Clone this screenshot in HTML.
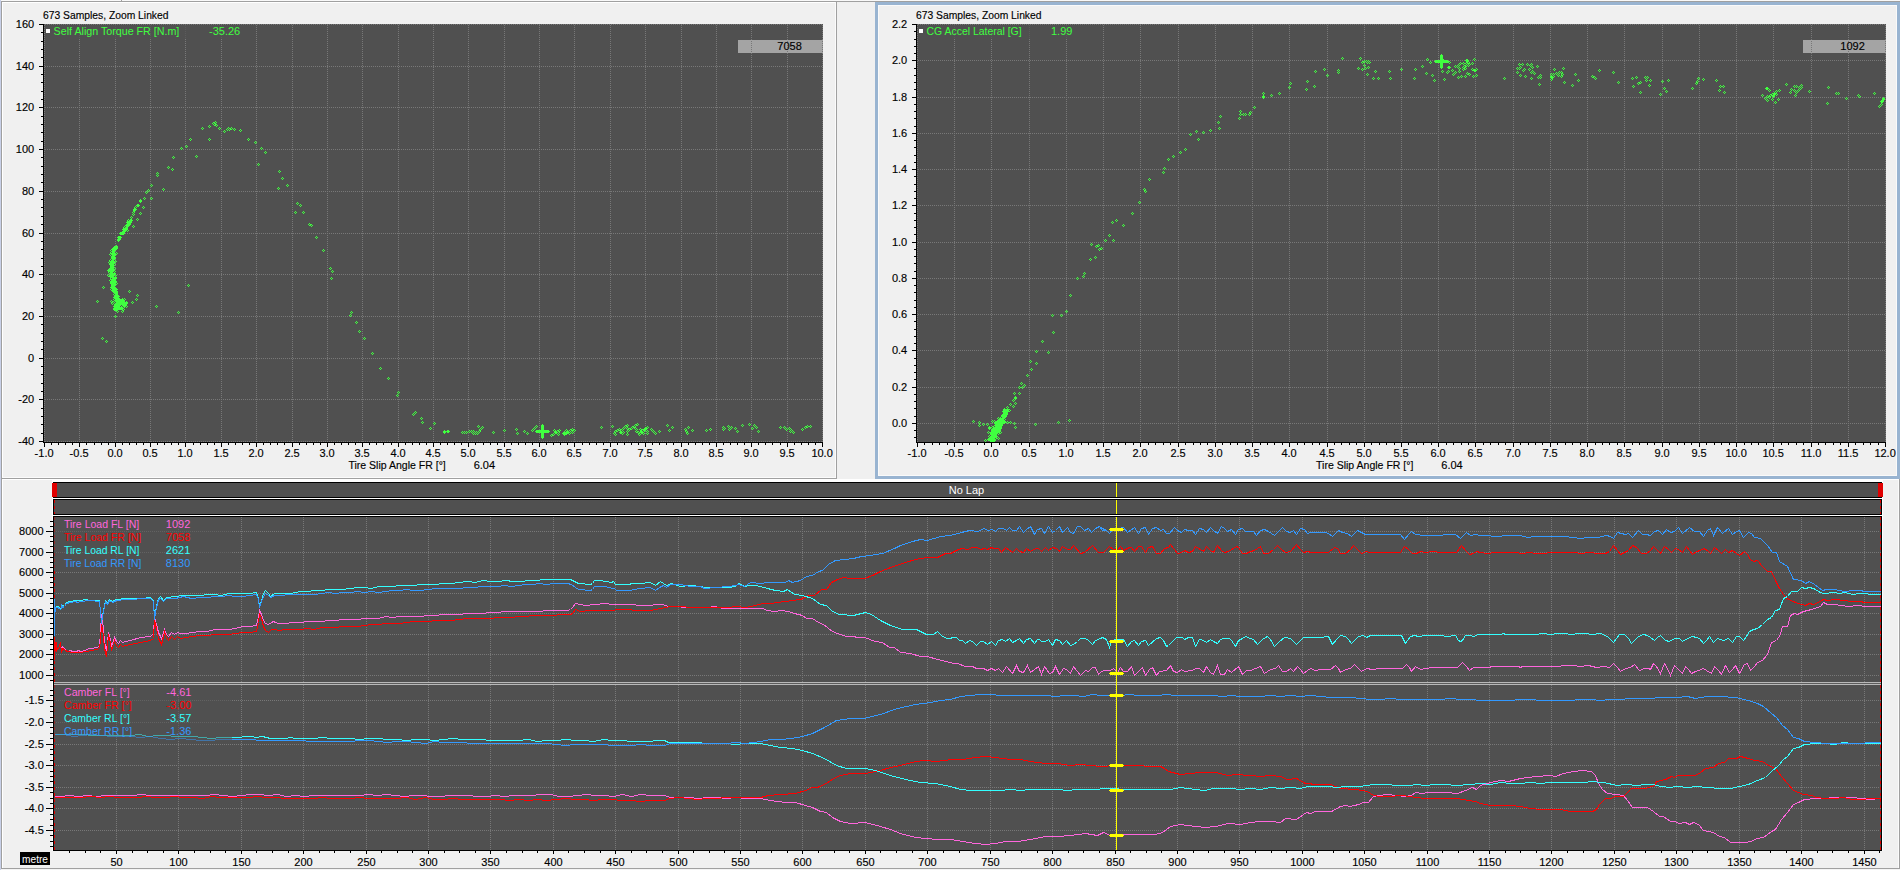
<!DOCTYPE html><html><head><meta charset="utf-8"><title>i2</title><style>html,body{margin:0;padding:0;background:#f0f0f0;overflow:hidden}svg{display:block}text{font-family:"Liberation Sans",sans-serif;font-size:11px;stroke-width:.15px;paint-order:stroke fill}text[fill="#000"]{stroke:#000}</style></head><body>
<svg width="1900" height="870" viewBox="0 0 1900 870">
<defs><path id="d" d="M1 0h1v1h-1zM0 1h1v1h-1zM2 1h1v1h-1zM1 2h1v1h-1z"/></defs>
<g shape-rendering="crispEdges">
<rect x="0" y="0" width="1900" height="870" fill="#f0f0f0"/>
<rect x="0" y="0" width="1900" height="1" fill="#f9f9f9"/>
<rect x="0" y="1" width="1900" height="1" fill="#a0a0a0"/>
<rect x="1" y="1" width="1" height="478" fill="#a0a0a0"/>
<rect x="836" y="1" width="1" height="478" fill="#a0a0a0"/>
<rect x="1" y="478" width="836" height="1" fill="#a0a0a0"/>
<rect x="2" y="2" width="834" height="1" fill="#ffffff"/>
<rect x="2" y="2" width="1" height="476" fill="#ffffff"/>
<rect x="835" y="2" width="1" height="476" fill="#fbfbfb"/>
<rect x="2" y="477" width="834" height="1" fill="#fbfbfb"/>
<rect x="875" y="2" width="1025" height="477" fill="#99b4d1"/>
<rect x="878" y="5" width="1019" height="471" fill="#fafafa"/>
<rect x="879" y="6" width="1017" height="469" fill="#f0f0f0"/>
<rect x="1" y="479" width="1898" height="1" fill="#ffffff"/>
<rect x="1" y="479" width="1" height="390" fill="#a0a0a0"/>
<rect x="2" y="480" width="1" height="388" fill="#ffffff"/>
<rect x="1899" y="479" width="1" height="391" fill="#a0a0a0"/>
<rect x="1898" y="480" width="1" height="388" fill="#fbfbfb"/>
<rect x="1" y="868" width="1899" height="1" fill="#a0a0a0"/>
<rect x="0" y="869" width="1900" height="1" fill="#f4f4f4"/>
<rect x="52" y="480" width="1831" height="371" fill="#ffffff"/>
<rect x="0" y="0" width="1" height="870" fill="#c8d0e8"/>
<rect x="121" y="0" width="1" height="1" fill="#a0a0a0"/>
<rect x="44" y="24" width="779" height="418" fill="#505050"/>
<rect x="43" y="24" width="1" height="419" fill="#000"/>
<rect x="43" y="442" width="780" height="1" fill="#000"/>
<text x="44.1" y="457" text-anchor="middle" fill="#000">-1.0</text>
<text x="79.1" y="457" text-anchor="middle" fill="#000">-0.5</text>
<text x="115.1" y="457" text-anchor="middle" fill="#000">0.0</text>
<text x="150.1" y="457" text-anchor="middle" fill="#000">0.5</text>
<text x="185.1" y="457" text-anchor="middle" fill="#000">1.0</text>
<text x="221.1" y="457" text-anchor="middle" fill="#000">1.5</text>
<text x="256.1" y="457" text-anchor="middle" fill="#000">2.0</text>
<text x="292.1" y="457" text-anchor="middle" fill="#000">2.5</text>
<text x="327.1" y="457" text-anchor="middle" fill="#000">3.0</text>
<text x="362.1" y="457" text-anchor="middle" fill="#000">3.5</text>
<text x="398.1" y="457" text-anchor="middle" fill="#000">4.0</text>
<text x="433.1" y="457" text-anchor="middle" fill="#000">4.5</text>
<text x="468.1" y="457" text-anchor="middle" fill="#000">5.0</text>
<text x="504.1" y="457" text-anchor="middle" fill="#000">5.5</text>
<text x="539.1" y="457" text-anchor="middle" fill="#000">6.0</text>
<text x="574.1" y="457" text-anchor="middle" fill="#000">6.5</text>
<text x="610.1" y="457" text-anchor="middle" fill="#000">7.0</text>
<text x="645.1" y="457" text-anchor="middle" fill="#000">7.5</text>
<text x="681.1" y="457" text-anchor="middle" fill="#000">8.0</text>
<text x="716.1" y="457" text-anchor="middle" fill="#000">8.5</text>
<text x="751.1" y="457" text-anchor="middle" fill="#000">9.0</text>
<text x="787.1" y="457" text-anchor="middle" fill="#000">9.5</text>
<text x="822.1" y="457" text-anchor="middle" fill="#000">10.0</text>
<text x="34.2" y="28" text-anchor="end" fill="#000">160</text>
<text x="34.2" y="70" text-anchor="end" fill="#000">140</text>
<text x="34.2" y="111" text-anchor="end" fill="#000">120</text>
<text x="34.2" y="153" text-anchor="end" fill="#000">100</text>
<text x="34.2" y="195" text-anchor="end" fill="#000">80</text>
<text x="34.2" y="237" text-anchor="end" fill="#000">60</text>
<text x="34.2" y="278" text-anchor="end" fill="#000">40</text>
<text x="34.2" y="320" text-anchor="end" fill="#000">20</text>
<text x="34.2" y="362" text-anchor="end" fill="#000">0</text>
<text x="34.2" y="403" text-anchor="end" fill="#000">-20</text>
<text x="34.2" y="445" text-anchor="end" fill="#000">-40</text>
<path d="M44 443h1v4h-1zM51 443h1v2h-1zM58 443h1v2h-1zM65 443h1v2h-1zM72 443h1v2h-1zM79 443h1v4h-1zM86 443h1v2h-1zM94 443h1v2h-1zM101 443h1v2h-1zM108 443h1v2h-1zM115 443h1v4h-1zM122 443h1v2h-1zM129 443h1v2h-1zM136 443h1v2h-1zM143 443h1v2h-1zM150 443h1v4h-1zM157 443h1v2h-1zM164 443h1v2h-1zM171 443h1v2h-1zM178 443h1v2h-1zM185 443h1v4h-1zM193 443h1v2h-1zM200 443h1v2h-1zM207 443h1v2h-1zM214 443h1v2h-1zM221 443h1v4h-1zM228 443h1v2h-1zM235 443h1v2h-1zM242 443h1v2h-1zM249 443h1v2h-1zM256 443h1v4h-1zM263 443h1v2h-1zM270 443h1v2h-1zM277 443h1v2h-1zM284 443h1v2h-1zM292 443h1v4h-1zM299 443h1v2h-1zM306 443h1v2h-1zM313 443h1v2h-1zM320 443h1v2h-1zM327 443h1v4h-1zM334 443h1v2h-1zM341 443h1v2h-1zM348 443h1v2h-1zM355 443h1v2h-1zM362 443h1v4h-1zM369 443h1v2h-1zM376 443h1v2h-1zM383 443h1v2h-1zM391 443h1v2h-1zM398 443h1v4h-1zM405 443h1v2h-1zM412 443h1v2h-1zM419 443h1v2h-1zM426 443h1v2h-1zM433 443h1v4h-1zM440 443h1v2h-1zM447 443h1v2h-1zM454 443h1v2h-1zM461 443h1v2h-1zM468 443h1v4h-1zM475 443h1v2h-1zM483 443h1v2h-1zM490 443h1v2h-1zM497 443h1v2h-1zM504 443h1v4h-1zM511 443h1v2h-1zM518 443h1v2h-1zM525 443h1v2h-1zM532 443h1v2h-1zM539 443h1v4h-1zM546 443h1v2h-1zM553 443h1v2h-1zM560 443h1v2h-1zM567 443h1v2h-1zM574 443h1v4h-1zM582 443h1v2h-1zM589 443h1v2h-1zM596 443h1v2h-1zM603 443h1v2h-1zM610 443h1v4h-1zM617 443h1v2h-1zM624 443h1v2h-1zM631 443h1v2h-1zM638 443h1v2h-1zM645 443h1v4h-1zM652 443h1v2h-1zM659 443h1v2h-1zM666 443h1v2h-1zM673 443h1v2h-1zM681 443h1v4h-1zM688 443h1v2h-1zM695 443h1v2h-1zM702 443h1v2h-1zM709 443h1v2h-1zM716 443h1v4h-1zM723 443h1v2h-1zM730 443h1v2h-1zM737 443h1v2h-1zM744 443h1v2h-1zM751 443h1v4h-1zM758 443h1v2h-1zM765 443h1v2h-1zM772 443h1v2h-1zM780 443h1v2h-1zM787 443h1v4h-1zM794 443h1v2h-1zM801 443h1v2h-1zM808 443h1v2h-1zM815 443h1v2h-1zM822 443h1v4h-1zM39 24h4v1h-4zM41 32h2v1h-2zM41 41h2v1h-2zM41 49h2v1h-2zM41 57h2v1h-2zM39 66h4v1h-4zM41 74h2v1h-2zM41 82h2v1h-2zM41 91h2v1h-2zM41 99h2v1h-2zM39 107h4v1h-4zM41 116h2v1h-2zM41 124h2v1h-2zM41 132h2v1h-2zM41 141h2v1h-2zM39 149h4v1h-4zM41 157h2v1h-2zM41 166h2v1h-2zM41 174h2v1h-2zM41 182h2v1h-2zM39 191h4v1h-4zM41 199h2v1h-2zM41 207h2v1h-2zM41 216h2v1h-2zM41 224h2v1h-2zM39 233h4v1h-4zM41 241h2v1h-2zM41 249h2v1h-2zM41 258h2v1h-2zM41 266h2v1h-2zM39 274h4v1h-4zM41 283h2v1h-2zM41 291h2v1h-2zM41 299h2v1h-2zM41 308h2v1h-2zM39 316h4v1h-4zM41 324h2v1h-2zM41 333h2v1h-2zM41 341h2v1h-2zM41 349h2v1h-2zM39 358h4v1h-4zM41 366h2v1h-2zM41 374h2v1h-2zM41 383h2v1h-2zM41 391h2v1h-2zM39 399h4v1h-4zM41 408h2v1h-2zM41 416h2v1h-2zM41 424h2v1h-2zM41 433h2v1h-2zM39 441h4v1h-4z" fill="#000"/>
<rect x="738" y="40" width="85" height="13" fill="#a4a4a4"/>
<path d="M44.5 25V442M79.5 25V442M115.5 25V442M150.5 25V442M185.5 25V442M221.5 25V442M256.5 25V442M292.5 25V442M327.5 25V442M362.5 25V442M398.5 25V442M433.5 25V442M468.5 25V442M504.5 25V442M539.5 25V442M574.5 25V442M610.5 25V442M645.5 25V442M681.5 25V442M716.5 25V442M751.5 25V442M787.5 25V442M822.5 25V442M45 24.5H823M45 66.5H823M45 107.5H823M45 149.5H823M45 191.5H823M45 233.5H823M45 274.5H823M45 316.5H823M45 358.5H823M45 399.5H823M45 441.5H823" stroke="#787878" stroke-width="1" stroke-dasharray="1 1" fill="none"/>
<rect x="45" y="25" width="202" height="13" fill="#505050" opacity="0.72"/>
<g fill="#40ff40"><use href="#d" x="201" y="127"/><use href="#d" x="208" y="125"/><use href="#d" x="212" y="122"/><use href="#d" x="214" y="121"/><use href="#d" x="215" y="124"/><use href="#d" x="213" y="123"/><use href="#d" x="218" y="127"/><use href="#d" x="223" y="130"/><use href="#d" x="226" y="128"/><use href="#d" x="228" y="128"/><use href="#d" x="230" y="127"/><use href="#d" x="227" y="127"/><use href="#d" x="233" y="128"/><use href="#d" x="239" y="129"/><use href="#d" x="247" y="138"/><use href="#d" x="254" y="141"/><use href="#d" x="260" y="147"/><use href="#d" x="264" y="151"/><use href="#d" x="257" y="163"/><use href="#d" x="278" y="170"/><use href="#d" x="281" y="177"/><use href="#d" x="286" y="184"/><use href="#d" x="277" y="187"/><use href="#d" x="296" y="202"/><use href="#d" x="299" y="204"/><use href="#d" x="294" y="211"/><use href="#d" x="302" y="211"/><use href="#d" x="208" y="138"/><use href="#d" x="189" y="138"/><use href="#d" x="185" y="145"/><use href="#d" x="180" y="147"/><use href="#d" x="195" y="155"/><use href="#d" x="172" y="156"/><use href="#d" x="167" y="166"/><use href="#d" x="171" y="168"/><use href="#d" x="156" y="172"/><use href="#d" x="156" y="174"/><use href="#d" x="150" y="184"/><use href="#d" x="162" y="188"/><use href="#d" x="147" y="189"/><use href="#d" x="145" y="191"/><use href="#d" x="150" y="197"/><use href="#d" x="143" y="197"/><use href="#d" x="139" y="199"/><use href="#d" x="136" y="204"/><use href="#d" x="142" y="206"/><use href="#d" x="134" y="208"/><use href="#d" x="139" y="212"/><use href="#d" x="132" y="213"/><use href="#d" x="130" y="216"/><use href="#d" x="136" y="218"/><use href="#d" x="129" y="219"/><use href="#d" x="127" y="222"/><use href="#d" x="132" y="225"/><use href="#d" x="126" y="225"/><use href="#d" x="139" y="200"/><use href="#d" x="102" y="286"/><use href="#d" x="96" y="300"/><use href="#d" x="128" y="290"/><use href="#d" x="136" y="294"/><use href="#d" x="135" y="298"/><use href="#d" x="131" y="301"/><use href="#d" x="155" y="305"/><use href="#d" x="177" y="311"/><use href="#d" x="187" y="284"/><use href="#d" x="114" y="315"/><use href="#d" x="101" y="337"/><use href="#d" x="105" y="340"/><use href="#d" x="308" y="223"/><use href="#d" x="310" y="224"/><use href="#d" x="315" y="236"/><use href="#d" x="322" y="249"/><use href="#d" x="329" y="267"/><use href="#d" x="331" y="270"/><use href="#d" x="330" y="277"/><use href="#d" x="350" y="311"/><use href="#d" x="349" y="314"/><use href="#d" x="355" y="321"/><use href="#d" x="358" y="330"/><use href="#d" x="363" y="337"/><use href="#d" x="371" y="352"/><use href="#d" x="379" y="367"/><use href="#d" x="387" y="377"/><use href="#d" x="397" y="391"/><use href="#d" x="396" y="394"/><use href="#d" x="414" y="411"/><use href="#d" x="412" y="413"/><use href="#d" x="420" y="417"/><use href="#d" x="421" y="421"/><use href="#d" x="433" y="422"/><use href="#d" x="429" y="427"/><use href="#d" x="443" y="431"/><use href="#d" x="446" y="430"/><use href="#d" x="443" y="430"/><use href="#d" x="447" y="430"/><use href="#d" x="461" y="431"/><use href="#d" x="463" y="431"/><use href="#d" x="465" y="431"/><use href="#d" x="477" y="425"/><use href="#d" x="481" y="426"/><use href="#d" x="479" y="428"/><use href="#d" x="492" y="431"/><use href="#d" x="503" y="429"/><use href="#d" x="515" y="428"/><use href="#d" x="516" y="432"/><use href="#d" x="523" y="430"/><use href="#d" x="526" y="432"/><use href="#d" x="550" y="434"/><use href="#d" x="600" y="426"/><use href="#d" x="611" y="425"/><use href="#d" x="666" y="424"/><use href="#d" x="668" y="429"/><use href="#d" x="671" y="426"/><use href="#d" x="684" y="428"/><use href="#d" x="686" y="432"/><use href="#d" x="687" y="426"/><use href="#d" x="691" y="429"/><use href="#d" x="685" y="430"/><use href="#d" x="705" y="429"/><use href="#d" x="709" y="428"/><use href="#d" x="734" y="427"/><use href="#d" x="736" y="430"/><use href="#d" x="741" y="424"/><use href="#d" x="748" y="423"/><use href="#d" x="751" y="427"/><use href="#d" x="753" y="424"/><use href="#d" x="755" y="426"/><use href="#d" x="757" y="430"/><use href="#d" x="779" y="426"/><use href="#d" x="783" y="426"/><use href="#d" x="785" y="428"/><use href="#d" x="789" y="430"/><use href="#d" x="801" y="428"/><use href="#d" x="804" y="426"/><use href="#d" x="806" y="425"/><use href="#d" x="809" y="425"/><use href="#d" x="133" y="208"/><use href="#d" x="133" y="209"/><use href="#d" x="134" y="206"/><use href="#d" x="137" y="204"/><use href="#d" x="132" y="211"/><use href="#d" x="123" y="226"/><use href="#d" x="124" y="225"/><use href="#d" x="123" y="228"/><use href="#d" x="122" y="232"/><use href="#d" x="123" y="229"/><use href="#d" x="128" y="223"/><use href="#d" x="126" y="224"/><use href="#d" x="120" y="232"/><use href="#d" x="128" y="221"/><use href="#d" x="124" y="227"/><use href="#d" x="123" y="230"/><use href="#d" x="129" y="221"/><use href="#d" x="126" y="221"/><use href="#d" x="127" y="221"/><use href="#d" x="124" y="228"/><use href="#d" x="127" y="224"/><use href="#d" x="121" y="232"/><use href="#d" x="126" y="223"/><use href="#d" x="126" y="229"/><use href="#d" x="127" y="223"/><use href="#d" x="127" y="219"/><use href="#d" x="119" y="232"/><use href="#d" x="122" y="231"/><use href="#d" x="121" y="231"/><use href="#d" x="125" y="226"/><use href="#d" x="128" y="220"/><use href="#d" x="125" y="227"/><use href="#d" x="130" y="219"/><use href="#d" x="122" y="228"/><use href="#d" x="125" y="228"/><use href="#d" x="118" y="236"/><use href="#d" x="118" y="237"/><use href="#d" x="118" y="238"/><use href="#d" x="117" y="236"/><use href="#d" x="119" y="236"/><use href="#d" x="117" y="238"/><use href="#d" x="117" y="239"/><use href="#d" x="112" y="251"/><use href="#d" x="113" y="246"/><use href="#d" x="113" y="249"/><use href="#d" x="113" y="248"/><use href="#d" x="114" y="246"/><use href="#d" x="112" y="250"/><use href="#d" x="115" y="245"/><use href="#d" x="112" y="248"/><use href="#d" x="115" y="247"/><use href="#d" x="112" y="249"/><use href="#d" x="113" y="247"/><use href="#d" x="115" y="246"/><use href="#d" x="116" y="296"/><use href="#d" x="115" y="304"/><use href="#d" x="109" y="275"/><use href="#d" x="108" y="271"/><use href="#d" x="117" y="297"/><use href="#d" x="114" y="291"/><use href="#d" x="114" y="297"/><use href="#d" x="114" y="260"/><use href="#d" x="113" y="307"/><use href="#d" x="113" y="267"/><use href="#d" x="112" y="271"/><use href="#d" x="112" y="281"/><use href="#d" x="116" y="298"/><use href="#d" x="116" y="297"/><use href="#d" x="111" y="278"/><use href="#d" x="115" y="290"/><use href="#d" x="116" y="307"/><use href="#d" x="111" y="284"/><use href="#d" x="110" y="288"/><use href="#d" x="111" y="285"/><use href="#d" x="116" y="299"/><use href="#d" x="117" y="300"/><use href="#d" x="112" y="286"/><use href="#d" x="111" y="280"/><use href="#d" x="114" y="307"/><use href="#d" x="115" y="292"/><use href="#d" x="114" y="274"/><use href="#d" x="110" y="266"/><use href="#d" x="112" y="273"/><use href="#d" x="111" y="279"/><use href="#d" x="113" y="286"/><use href="#d" x="110" y="262"/><use href="#d" x="110" y="271"/><use href="#d" x="116" y="294"/><use href="#d" x="111" y="266"/><use href="#d" x="110" y="277"/><use href="#d" x="112" y="282"/><use href="#d" x="113" y="298"/><use href="#d" x="110" y="261"/><use href="#d" x="115" y="305"/><use href="#d" x="116" y="310"/><use href="#d" x="116" y="303"/><use href="#d" x="114" y="294"/><use href="#d" x="113" y="300"/><use href="#d" x="109" y="259"/><use href="#d" x="112" y="253"/><use href="#d" x="116" y="304"/><use href="#d" x="113" y="257"/><use href="#d" x="111" y="264"/><use href="#d" x="116" y="308"/><use href="#d" x="113" y="253"/><use href="#d" x="110" y="281"/><use href="#d" x="111" y="248"/><use href="#d" x="108" y="261"/><use href="#d" x="111" y="275"/><use href="#d" x="114" y="281"/><use href="#d" x="114" y="295"/><use href="#d" x="111" y="289"/><use href="#d" x="114" y="280"/><use href="#d" x="112" y="264"/><use href="#d" x="116" y="295"/><use href="#d" x="117" y="301"/><use href="#d" x="115" y="294"/><use href="#d" x="115" y="293"/><use href="#d" x="112" y="278"/><use href="#d" x="112" y="287"/><use href="#d" x="112" y="288"/><use href="#d" x="113" y="273"/><use href="#d" x="114" y="287"/><use href="#d" x="110" y="249"/><use href="#d" x="110" y="265"/><use href="#d" x="113" y="280"/><use href="#d" x="109" y="253"/><use href="#d" x="112" y="252"/><use href="#d" x="112" y="280"/><use href="#d" x="115" y="288"/><use href="#d" x="110" y="274"/><use href="#d" x="111" y="286"/><use href="#d" x="111" y="268"/><use href="#d" x="113" y="254"/><use href="#d" x="113" y="272"/><use href="#d" x="115" y="252"/><use href="#d" x="114" y="277"/><use href="#d" x="113" y="283"/><use href="#d" x="112" y="290"/><use href="#d" x="110" y="286"/><use href="#d" x="115" y="282"/><use href="#d" x="116" y="301"/><use href="#d" x="110" y="282"/><use href="#d" x="115" y="296"/><use href="#d" x="118" y="307"/><use href="#d" x="110" y="275"/><use href="#d" x="112" y="289"/><use href="#d" x="110" y="272"/><use href="#d" x="110" y="267"/><use href="#d" x="113" y="256"/><use href="#d" x="108" y="268"/><use href="#d" x="114" y="305"/><use href="#d" x="112" y="255"/><use href="#d" x="110" y="254"/><use href="#d" x="113" y="293"/><use href="#d" x="112" y="256"/><use href="#d" x="111" y="257"/><use href="#d" x="114" y="292"/><use href="#d" x="110" y="270"/><use href="#d" x="111" y="255"/><use href="#d" x="118" y="303"/><use href="#d" x="110" y="273"/><use href="#d" x="113" y="296"/><use href="#d" x="115" y="302"/><use href="#d" x="110" y="280"/><use href="#d" x="117" y="304"/><use href="#d" x="111" y="256"/><use href="#d" x="111" y="267"/><use href="#d" x="113" y="270"/><use href="#d" x="109" y="279"/><use href="#d" x="115" y="291"/><use href="#d" x="114" y="296"/><use href="#d" x="117" y="295"/><use href="#d" x="112" y="277"/><use href="#d" x="115" y="309"/><use href="#d" x="110" y="263"/><use href="#d" x="112" y="261"/><use href="#d" x="112" y="285"/><use href="#d" x="112" y="257"/><use href="#d" x="111" y="259"/><use href="#d" x="113" y="263"/><use href="#d" x="107" y="269"/><use href="#d" x="116" y="305"/><use href="#d" x="115" y="308"/><use href="#d" x="110" y="251"/><use href="#d" x="115" y="295"/><use href="#d" x="112" y="260"/><use href="#d" x="114" y="288"/><use href="#d" x="113" y="284"/><use href="#d" x="113" y="277"/><use href="#d" x="115" y="303"/><use href="#d" x="111" y="274"/><use href="#d" x="110" y="269"/><use href="#d" x="108" y="269"/><use href="#d" x="107" y="274"/><use href="#d" x="115" y="299"/><use href="#d" x="112" y="284"/><use href="#d" x="111" y="283"/><use href="#d" x="111" y="260"/><use href="#d" x="113" y="305"/><use href="#d" x="111" y="269"/><use href="#d" x="113" y="259"/><use href="#d" x="114" y="276"/><use href="#d" x="111" y="252"/><use href="#d" x="114" y="290"/><use href="#d" x="114" y="303"/><use href="#d" x="113" y="282"/><use href="#d" x="113" y="308"/><use href="#d" x="113" y="288"/><use href="#d" x="109" y="263"/><use href="#d" x="112" y="269"/><use href="#d" x="118" y="304"/><use href="#d" x="112" y="283"/><use href="#d" x="121" y="310"/><use href="#d" x="122" y="300"/><use href="#d" x="116" y="306"/><use href="#d" x="117" y="298"/><use href="#d" x="119" y="302"/><use href="#d" x="116" y="302"/><use href="#d" x="119" y="305"/><use href="#d" x="117" y="306"/><use href="#d" x="122" y="303"/><use href="#d" x="122" y="308"/><use href="#d" x="114" y="304"/><use href="#d" x="118" y="298"/><use href="#d" x="123" y="301"/><use href="#d" x="119" y="299"/><use href="#d" x="121" y="299"/><use href="#d" x="114" y="301"/><use href="#d" x="120" y="300"/><use href="#d" x="121" y="298"/><use href="#d" x="117" y="302"/><use href="#d" x="124" y="304"/><use href="#d" x="122" y="301"/><use href="#d" x="120" y="299"/><use href="#d" x="118" y="299"/><use href="#d" x="119" y="301"/><use href="#d" x="118" y="300"/><use href="#d" x="110" y="300"/><use href="#d" x="120" y="302"/><use href="#d" x="123" y="304"/><use href="#d" x="118" y="302"/><use href="#d" x="111" y="302"/><use href="#d" x="121" y="301"/><use href="#d" x="123" y="298"/><use href="#d" x="119" y="307"/><use href="#d" x="120" y="307"/><use href="#d" x="124" y="303"/><use href="#d" x="125" y="305"/><use href="#d" x="125" y="301"/><use href="#d" x="125" y="302"/><use href="#d" x="120" y="306"/><use href="#d" x="122" y="304"/><use href="#d" x="122" y="306"/><use href="#d" x="121" y="302"/><use href="#d" x="472" y="430"/><use href="#d" x="468" y="430"/><use href="#d" x="471" y="431"/><use href="#d" x="470" y="430"/><use href="#d" x="476" y="432"/><use href="#d" x="473" y="431"/><use href="#d" x="478" y="430"/><use href="#d" x="475" y="431"/><use href="#d" x="472" y="432"/><use href="#d" x="474" y="432"/><use href="#d" x="531" y="429"/><use href="#d" x="532" y="428"/><use href="#d" x="533" y="427"/><use href="#d" x="534" y="426"/><use href="#d" x="535" y="425"/><use href="#d" x="555" y="431"/><use href="#d" x="564" y="430"/><use href="#d" x="568" y="430"/><use href="#d" x="571" y="431"/><use href="#d" x="557" y="433"/><use href="#d" x="563" y="433"/><use href="#d" x="565" y="431"/><use href="#d" x="563" y="432"/><use href="#d" x="553" y="429"/><use href="#d" x="567" y="431"/><use href="#d" x="565" y="429"/><use href="#d" x="568" y="432"/><use href="#d" x="557" y="431"/><use href="#d" x="562" y="432"/><use href="#d" x="573" y="429"/><use href="#d" x="552" y="433"/><use href="#d" x="554" y="431"/><use href="#d" x="556" y="430"/><use href="#d" x="558" y="429"/><use href="#d" x="565" y="432"/><use href="#d" x="566" y="431"/><use href="#d" x="569" y="429"/><use href="#d" x="571" y="428"/><use href="#d" x="634" y="427"/><use href="#d" x="620" y="429"/><use href="#d" x="614" y="433"/><use href="#d" x="630" y="427"/><use href="#d" x="626" y="427"/><use href="#d" x="635" y="428"/><use href="#d" x="635" y="430"/><use href="#d" x="622" y="431"/><use href="#d" x="620" y="431"/><use href="#d" x="626" y="433"/><use href="#d" x="621" y="432"/><use href="#d" x="619" y="431"/><use href="#d" x="621" y="428"/><use href="#d" x="623" y="426"/><use href="#d" x="624" y="425"/><use href="#d" x="626" y="424"/><use href="#d" x="626" y="430"/><use href="#d" x="627" y="429"/><use href="#d" x="628" y="428"/><use href="#d" x="631" y="426"/><use href="#d" x="633" y="425"/><use href="#d" x="634" y="424"/><use href="#d" x="636" y="423"/><use href="#d" x="613" y="432"/><use href="#d" x="614" y="430"/><use href="#d" x="616" y="429"/><use href="#d" x="618" y="428"/><use href="#d" x="654" y="432"/><use href="#d" x="646" y="430"/><use href="#d" x="640" y="430"/><use href="#d" x="645" y="427"/><use href="#d" x="658" y="430"/><use href="#d" x="652" y="430"/><use href="#d" x="650" y="428"/><use href="#d" x="637" y="431"/><use href="#d" x="639" y="428"/><use href="#d" x="638" y="433"/><use href="#d" x="646" y="432"/><use href="#d" x="642" y="432"/><use href="#d" x="642" y="430"/><use href="#d" x="641" y="429"/><use href="#d" x="643" y="429"/><use href="#d" x="640" y="431"/><use href="#d" x="643" y="428"/><use href="#d" x="644" y="427"/><use href="#d" x="646" y="426"/><use href="#d" x="729" y="427"/><use href="#d" x="723" y="427"/><use href="#d" x="722" y="426"/><use href="#d" x="722" y="428"/><use href="#d" x="727" y="425"/><use href="#d" x="728" y="428"/><use href="#d" x="730" y="426"/><use href="#d" x="788" y="427"/><use href="#d" x="789" y="428"/><use href="#d" x="790" y="429"/><use href="#d" x="792" y="431"/></g>
<path d="M536 430h13v1h1v1h-1v1h-13v-1h-1v-1h1zM541 425h1v-1h1v1h1v13h-1v1h-1v-1h-1z" fill="#40ff40"/>
<rect x="46" y="29" width="4" height="4" fill="#ffffff"/>
<text x="53.6" y="35" fill="#40ff40" textLength="125.7" lengthAdjust="spacingAndGlyphs">Self Align Torque FR [N.m]</text>
<text x="209" y="35" fill="#40ff40">-35.26</text>
<text x="43" y="19" fill="#000" textLength="125.5" lengthAdjust="spacingAndGlyphs">673 Samples, Zoom Linked</text>
<text x="801.8" y="50" text-anchor="end" fill="#000">7058</text>
<text x="348.4" y="469" fill="#000" textLength="97.4" lengthAdjust="spacingAndGlyphs">Tire Slip Angle FR [°]</text>
<text x="473.7" y="469" fill="#000">6.04</text>
<rect x="917" y="24" width="969" height="418" fill="#505050"/>
<rect x="916" y="24" width="1" height="419" fill="#000"/>
<rect x="916" y="442" width="970" height="1" fill="#000"/>
<text x="917.1" y="457" text-anchor="middle" fill="#000">-1.0</text>
<text x="954.1" y="457" text-anchor="middle" fill="#000">-0.5</text>
<text x="991.1" y="457" text-anchor="middle" fill="#000">0.0</text>
<text x="1029.1" y="457" text-anchor="middle" fill="#000">0.5</text>
<text x="1066.1" y="457" text-anchor="middle" fill="#000">1.0</text>
<text x="1103.1" y="457" text-anchor="middle" fill="#000">1.5</text>
<text x="1140.1" y="457" text-anchor="middle" fill="#000">2.0</text>
<text x="1178.1" y="457" text-anchor="middle" fill="#000">2.5</text>
<text x="1215.1" y="457" text-anchor="middle" fill="#000">3.0</text>
<text x="1252.1" y="457" text-anchor="middle" fill="#000">3.5</text>
<text x="1289.1" y="457" text-anchor="middle" fill="#000">4.0</text>
<text x="1327.1" y="457" text-anchor="middle" fill="#000">4.5</text>
<text x="1364.1" y="457" text-anchor="middle" fill="#000">5.0</text>
<text x="1401.1" y="457" text-anchor="middle" fill="#000">5.5</text>
<text x="1438.1" y="457" text-anchor="middle" fill="#000">6.0</text>
<text x="1475.1" y="457" text-anchor="middle" fill="#000">6.5</text>
<text x="1513.1" y="457" text-anchor="middle" fill="#000">7.0</text>
<text x="1550.1" y="457" text-anchor="middle" fill="#000">7.5</text>
<text x="1587.1" y="457" text-anchor="middle" fill="#000">8.0</text>
<text x="1624.1" y="457" text-anchor="middle" fill="#000">8.5</text>
<text x="1662.1" y="457" text-anchor="middle" fill="#000">9.0</text>
<text x="1699.1" y="457" text-anchor="middle" fill="#000">9.5</text>
<text x="1736.1" y="457" text-anchor="middle" fill="#000">10.0</text>
<text x="1773.1" y="457" text-anchor="middle" fill="#000">10.5</text>
<text x="1811.1" y="457" text-anchor="middle" fill="#000">11.0</text>
<text x="1848.1" y="457" text-anchor="middle" fill="#000">11.5</text>
<text x="1885.1" y="457" text-anchor="middle" fill="#000">12.0</text>
<text x="907.2" y="28" text-anchor="end" fill="#000">2.2</text>
<text x="907.2" y="64" text-anchor="end" fill="#000">2.0</text>
<text x="907.2" y="101" text-anchor="end" fill="#000">1.8</text>
<text x="907.2" y="137" text-anchor="end" fill="#000">1.6</text>
<text x="907.2" y="173" text-anchor="end" fill="#000">1.4</text>
<text x="907.2" y="209" text-anchor="end" fill="#000">1.2</text>
<text x="907.2" y="246" text-anchor="end" fill="#000">1.0</text>
<text x="907.2" y="282" text-anchor="end" fill="#000">0.8</text>
<text x="907.2" y="318" text-anchor="end" fill="#000">0.6</text>
<text x="907.2" y="354" text-anchor="end" fill="#000">0.4</text>
<text x="907.2" y="391" text-anchor="end" fill="#000">0.2</text>
<text x="907.2" y="427" text-anchor="end" fill="#000">0.0</text>
<path d="M917 443h1v4h-1zM924 443h1v2h-1zM932 443h1v2h-1zM939 443h1v2h-1zM947 443h1v2h-1zM954 443h1v4h-1zM962 443h1v2h-1zM969 443h1v2h-1zM977 443h1v2h-1zM984 443h1v2h-1zM991 443h1v4h-1zM999 443h1v2h-1zM1006 443h1v2h-1zM1014 443h1v2h-1zM1021 443h1v2h-1zM1029 443h1v4h-1zM1036 443h1v2h-1zM1044 443h1v2h-1zM1051 443h1v2h-1zM1058 443h1v2h-1zM1066 443h1v4h-1zM1073 443h1v2h-1zM1081 443h1v2h-1zM1088 443h1v2h-1zM1096 443h1v2h-1zM1103 443h1v4h-1zM1111 443h1v2h-1zM1118 443h1v2h-1zM1125 443h1v2h-1zM1133 443h1v2h-1zM1140 443h1v4h-1zM1148 443h1v2h-1zM1155 443h1v2h-1zM1163 443h1v2h-1zM1170 443h1v2h-1zM1178 443h1v4h-1zM1185 443h1v2h-1zM1193 443h1v2h-1zM1200 443h1v2h-1zM1207 443h1v2h-1zM1215 443h1v4h-1zM1222 443h1v2h-1zM1230 443h1v2h-1zM1237 443h1v2h-1zM1245 443h1v2h-1zM1252 443h1v4h-1zM1260 443h1v2h-1zM1267 443h1v2h-1zM1274 443h1v2h-1zM1282 443h1v2h-1zM1289 443h1v4h-1zM1297 443h1v2h-1zM1304 443h1v2h-1zM1312 443h1v2h-1zM1319 443h1v2h-1zM1327 443h1v4h-1zM1334 443h1v2h-1zM1341 443h1v2h-1zM1349 443h1v2h-1zM1356 443h1v2h-1zM1364 443h1v4h-1zM1371 443h1v2h-1zM1379 443h1v2h-1zM1386 443h1v2h-1zM1394 443h1v2h-1zM1401 443h1v4h-1zM1408 443h1v2h-1zM1416 443h1v2h-1zM1423 443h1v2h-1zM1431 443h1v2h-1zM1438 443h1v4h-1zM1446 443h1v2h-1zM1453 443h1v2h-1zM1461 443h1v2h-1zM1468 443h1v2h-1zM1475 443h1v4h-1zM1483 443h1v2h-1zM1490 443h1v2h-1zM1498 443h1v2h-1zM1505 443h1v2h-1zM1513 443h1v4h-1zM1520 443h1v2h-1zM1528 443h1v2h-1zM1535 443h1v2h-1zM1542 443h1v2h-1zM1550 443h1v4h-1zM1557 443h1v2h-1zM1565 443h1v2h-1zM1572 443h1v2h-1zM1580 443h1v2h-1zM1587 443h1v4h-1zM1595 443h1v2h-1zM1602 443h1v2h-1zM1609 443h1v2h-1zM1617 443h1v2h-1zM1624 443h1v4h-1zM1632 443h1v2h-1zM1639 443h1v2h-1zM1647 443h1v2h-1zM1654 443h1v2h-1zM1662 443h1v4h-1zM1669 443h1v2h-1zM1677 443h1v2h-1zM1684 443h1v2h-1zM1691 443h1v2h-1zM1699 443h1v4h-1zM1706 443h1v2h-1zM1714 443h1v2h-1zM1721 443h1v2h-1zM1729 443h1v2h-1zM1736 443h1v4h-1zM1744 443h1v2h-1zM1751 443h1v2h-1zM1758 443h1v2h-1zM1766 443h1v2h-1zM1773 443h1v4h-1zM1781 443h1v2h-1zM1788 443h1v2h-1zM1796 443h1v2h-1zM1803 443h1v2h-1zM1811 443h1v4h-1zM1818 443h1v2h-1zM1825 443h1v2h-1zM1833 443h1v2h-1zM1840 443h1v2h-1zM1848 443h1v4h-1zM1855 443h1v2h-1zM1863 443h1v2h-1zM1870 443h1v2h-1zM1878 443h1v2h-1zM1885 443h1v4h-1zM912 24h4v1h-4zM914 31h2v1h-2zM914 39h2v1h-2zM914 46h2v1h-2zM914 53h2v1h-2zM912 60h4v1h-4zM914 68h2v1h-2zM914 75h2v1h-2zM914 82h2v1h-2zM914 89h2v1h-2zM912 97h4v1h-4zM914 104h2v1h-2zM914 111h2v1h-2zM914 118h2v1h-2zM914 126h2v1h-2zM912 133h4v1h-4zM914 140h2v1h-2zM914 147h2v1h-2zM914 155h2v1h-2zM914 162h2v1h-2zM912 169h4v1h-4zM914 176h2v1h-2zM914 184h2v1h-2zM914 191h2v1h-2zM914 198h2v1h-2zM912 205h4v1h-4zM914 213h2v1h-2zM914 220h2v1h-2zM914 227h2v1h-2zM914 234h2v1h-2zM912 242h4v1h-4zM914 249h2v1h-2zM914 256h2v1h-2zM914 263h2v1h-2zM914 271h2v1h-2zM912 278h4v1h-4zM914 285h2v1h-2zM914 292h2v1h-2zM914 300h2v1h-2zM914 307h2v1h-2zM912 314h4v1h-4zM914 321h2v1h-2zM914 329h2v1h-2zM914 336h2v1h-2zM914 343h2v1h-2zM912 350h4v1h-4zM914 358h2v1h-2zM914 365h2v1h-2zM914 372h2v1h-2zM914 379h2v1h-2zM912 387h4v1h-4zM914 394h2v1h-2zM914 401h2v1h-2zM914 408h2v1h-2zM914 416h2v1h-2zM912 423h4v1h-4zM914 430h2v1h-2zM914 437h2v1h-2z" fill="#000"/>
<rect x="1803" y="40" width="83" height="13" fill="#a4a4a4"/>
<path d="M917.5 25V442M954.5 25V442M991.5 25V442M1029.5 25V442M1066.5 25V442M1103.5 25V442M1140.5 25V442M1178.5 25V442M1215.5 25V442M1252.5 25V442M1289.5 25V442M1327.5 25V442M1364.5 25V442M1401.5 25V442M1438.5 25V442M1475.5 25V442M1513.5 25V442M1550.5 25V442M1587.5 25V442M1624.5 25V442M1662.5 25V442M1699.5 25V442M1736.5 25V442M1773.5 25V442M1811.5 25V442M1848.5 25V442M1885.5 25V442M918 24.5H1886M918 60.5H1886M918 97.5H1886M918 133.5H1886M918 169.5H1886M918 205.5H1886M918 242.5H1886M918 278.5H1886M918 314.5H1886M918 350.5H1886M918 387.5H1886M918 423.5H1886" stroke="#787878" stroke-width="1" stroke-dasharray="1 1" fill="none"/>
<rect x="918" y="25" width="165" height="13" fill="#505050" opacity="0.72"/>
<g fill="#40ff40"><use href="#d" x="1262" y="92"/><use href="#d" x="1262" y="95"/><use href="#d" x="1270" y="94"/><use href="#d" x="1253" y="106"/><use href="#d" x="1248" y="113"/><use href="#d" x="1244" y="113"/><use href="#d" x="1239" y="110"/><use href="#d" x="1238" y="117"/><use href="#d" x="1219" y="115"/><use href="#d" x="1217" y="121"/><use href="#d" x="1218" y="127"/><use href="#d" x="1209" y="129"/><use href="#d" x="1202" y="131"/><use href="#d" x="1195" y="130"/><use href="#d" x="1197" y="138"/><use href="#d" x="1189" y="133"/><use href="#d" x="1184" y="148"/><use href="#d" x="1179" y="151"/><use href="#d" x="1172" y="155"/><use href="#d" x="1167" y="158"/><use href="#d" x="1163" y="167"/><use href="#d" x="1162" y="171"/><use href="#d" x="1148" y="178"/><use href="#d" x="1143" y="188"/><use href="#d" x="1144" y="190"/><use href="#d" x="1138" y="201"/><use href="#d" x="1131" y="212"/><use href="#d" x="1122" y="224"/><use href="#d" x="1115" y="219"/><use href="#d" x="1111" y="221"/><use href="#d" x="1108" y="234"/><use href="#d" x="1104" y="239"/><use href="#d" x="1112" y="239"/><use href="#d" x="1095" y="245"/><use href="#d" x="1098" y="248"/><use href="#d" x="1100" y="247"/><use href="#d" x="1097" y="244"/><use href="#d" x="1090" y="243"/><use href="#d" x="1094" y="256"/><use href="#d" x="1089" y="258"/><use href="#d" x="1083" y="272"/><use href="#d" x="1082" y="275"/><use href="#d" x="1076" y="277"/><use href="#d" x="1069" y="294"/><use href="#d" x="1065" y="310"/><use href="#d" x="1060" y="314"/><use href="#d" x="1051" y="314"/><use href="#d" x="1052" y="331"/><use href="#d" x="1041" y="340"/><use href="#d" x="1047" y="351"/><use href="#d" x="1035" y="350"/><use href="#d" x="1029" y="360"/><use href="#d" x="1035" y="362"/><use href="#d" x="1030" y="368"/><use href="#d" x="1026" y="374"/><use href="#d" x="1034" y="423"/><use href="#d" x="1057" y="421"/><use href="#d" x="1068" y="419"/><use href="#d" x="1239" y="113"/><use href="#d" x="1242" y="113"/><use href="#d" x="1249" y="111"/><use href="#d" x="1262" y="96"/><use href="#d" x="1278" y="92"/><use href="#d" x="1288" y="86"/><use href="#d" x="1289" y="82"/><use href="#d" x="1305" y="88"/><use href="#d" x="1306" y="80"/><use href="#d" x="1313" y="85"/><use href="#d" x="1314" y="70"/><use href="#d" x="1323" y="68"/><use href="#d" x="1326" y="74"/><use href="#d" x="1337" y="69"/><use href="#d" x="1337" y="71"/><use href="#d" x="1341" y="57"/><use href="#d" x="1357" y="67"/><use href="#d" x="1359" y="57"/><use href="#d" x="1372" y="77"/><use href="#d" x="1374" y="70"/><use href="#d" x="1377" y="77"/><use href="#d" x="1388" y="70"/><use href="#d" x="1389" y="77"/><use href="#d" x="1400" y="68"/><use href="#d" x="1413" y="77"/><use href="#d" x="1414" y="68"/><use href="#d" x="1421" y="65"/><use href="#d" x="1425" y="72"/><use href="#d" x="1426" y="58"/><use href="#d" x="1429" y="61"/><use href="#d" x="1431" y="74"/><use href="#d" x="1433" y="79"/><use href="#d" x="1443" y="78"/><use href="#d" x="1503" y="77"/><use href="#d" x="1538" y="83"/><use href="#d" x="1563" y="81"/><use href="#d" x="1571" y="84"/><use href="#d" x="1574" y="73"/><use href="#d" x="1577" y="79"/><use href="#d" x="1591" y="75"/><use href="#d" x="1593" y="76"/><use href="#d" x="1594" y="77"/><use href="#d" x="1598" y="69"/><use href="#d" x="1612" y="71"/><use href="#d" x="1617" y="81"/><use href="#d" x="1632" y="85"/><use href="#d" x="1639" y="91"/><use href="#d" x="1659" y="93"/><use href="#d" x="1661" y="80"/><use href="#d" x="1663" y="87"/><use href="#d" x="1665" y="90"/><use href="#d" x="1667" y="79"/><use href="#d" x="1691" y="87"/><use href="#d" x="1695" y="82"/><use href="#d" x="1696" y="80"/><use href="#d" x="1697" y="77"/><use href="#d" x="1702" y="78"/><use href="#d" x="1715" y="79"/><use href="#d" x="1718" y="89"/><use href="#d" x="1719" y="85"/><use href="#d" x="1722" y="85"/><use href="#d" x="1723" y="91"/><use href="#d" x="1785" y="83"/><use href="#d" x="1808" y="90"/><use href="#d" x="1826" y="102"/><use href="#d" x="1827" y="86"/><use href="#d" x="1835" y="92"/><use href="#d" x="1837" y="92"/><use href="#d" x="1845" y="97"/><use href="#d" x="1857" y="94"/><use href="#d" x="1858" y="95"/><use href="#d" x="1873" y="92"/><use href="#d" x="997" y="421"/><use href="#d" x="998" y="422"/><use href="#d" x="990" y="436"/><use href="#d" x="994" y="426"/><use href="#d" x="990" y="435"/><use href="#d" x="990" y="439"/><use href="#d" x="993" y="439"/><use href="#d" x="990" y="438"/><use href="#d" x="991" y="437"/><use href="#d" x="995" y="426"/><use href="#d" x="993" y="434"/><use href="#d" x="994" y="428"/><use href="#d" x="999" y="418"/><use href="#d" x="1001" y="420"/><use href="#d" x="994" y="431"/><use href="#d" x="991" y="429"/><use href="#d" x="996" y="424"/><use href="#d" x="995" y="424"/><use href="#d" x="997" y="425"/><use href="#d" x="996" y="428"/><use href="#d" x="1001" y="417"/><use href="#d" x="993" y="432"/><use href="#d" x="1002" y="420"/><use href="#d" x="997" y="423"/><use href="#d" x="999" y="423"/><use href="#d" x="995" y="432"/><use href="#d" x="994" y="437"/><use href="#d" x="989" y="439"/><use href="#d" x="994" y="429"/><use href="#d" x="992" y="432"/><use href="#d" x="992" y="434"/><use href="#d" x="995" y="425"/><use href="#d" x="991" y="438"/><use href="#d" x="1001" y="421"/><use href="#d" x="998" y="420"/><use href="#d" x="994" y="422"/><use href="#d" x="996" y="422"/><use href="#d" x="993" y="433"/><use href="#d" x="993" y="425"/><use href="#d" x="998" y="425"/><use href="#d" x="997" y="426"/><use href="#d" x="997" y="422"/><use href="#d" x="996" y="420"/><use href="#d" x="996" y="426"/><use href="#d" x="992" y="436"/><use href="#d" x="999" y="421"/><use href="#d" x="993" y="431"/><use href="#d" x="993" y="429"/><use href="#d" x="1000" y="416"/><use href="#d" x="1000" y="419"/><use href="#d" x="993" y="435"/><use href="#d" x="991" y="436"/><use href="#d" x="994" y="430"/><use href="#d" x="993" y="436"/><use href="#d" x="996" y="430"/><use href="#d" x="992" y="437"/><use href="#d" x="992" y="435"/><use href="#d" x="989" y="438"/><use href="#d" x="993" y="427"/><use href="#d" x="988" y="437"/><use href="#d" x="996" y="423"/><use href="#d" x="999" y="424"/><use href="#d" x="995" y="428"/><use href="#d" x="992" y="431"/><use href="#d" x="998" y="423"/><use href="#d" x="1000" y="422"/><use href="#d" x="1003" y="421"/><use href="#d" x="987" y="438"/><use href="#d" x="999" y="425"/><use href="#d" x="991" y="435"/><use href="#d" x="990" y="431"/><use href="#d" x="998" y="418"/><use href="#d" x="991" y="439"/><use href="#d" x="996" y="427"/><use href="#d" x="997" y="424"/><use href="#d" x="1000" y="423"/><use href="#d" x="999" y="422"/><use href="#d" x="998" y="419"/><use href="#d" x="999" y="420"/><use href="#d" x="1000" y="424"/><use href="#d" x="996" y="431"/><use href="#d" x="992" y="438"/><use href="#d" x="995" y="431"/><use href="#d" x="1001" y="419"/><use href="#d" x="994" y="432"/><use href="#d" x="993" y="430"/><use href="#d" x="1001" y="422"/><use href="#d" x="992" y="439"/><use href="#d" x="995" y="427"/><use href="#d" x="1000" y="418"/><use href="#d" x="992" y="427"/><use href="#d" x="992" y="429"/><use href="#d" x="988" y="438"/><use href="#d" x="989" y="437"/><use href="#d" x="988" y="435"/><use href="#d" x="991" y="426"/><use href="#d" x="997" y="437"/><use href="#d" x="995" y="430"/><use href="#d" x="991" y="432"/><use href="#d" x="997" y="428"/><use href="#d" x="994" y="427"/><use href="#d" x="993" y="428"/><use href="#d" x="997" y="432"/><use href="#d" x="999" y="419"/><use href="#d" x="996" y="429"/><use href="#d" x="994" y="435"/><use href="#d" x="998" y="427"/><use href="#d" x="998" y="421"/><use href="#d" x="1000" y="421"/><use href="#d" x="990" y="432"/><use href="#d" x="995" y="422"/><use href="#d" x="991" y="434"/><use href="#d" x="999" y="427"/><use href="#d" x="991" y="433"/><use href="#d" x="990" y="433"/><use href="#d" x="992" y="433"/><use href="#d" x="992" y="430"/><use href="#d" x="996" y="421"/><use href="#d" x="999" y="426"/><use href="#d" x="989" y="434"/><use href="#d" x="1000" y="420"/><use href="#d" x="991" y="428"/><use href="#d" x="998" y="429"/><use href="#d" x="1003" y="418"/><use href="#d" x="995" y="429"/><use href="#d" x="996" y="425"/><use href="#d" x="995" y="421"/><use href="#d" x="998" y="424"/><use href="#d" x="991" y="431"/><use href="#d" x="1001" y="414"/><use href="#d" x="1006" y="409"/><use href="#d" x="1006" y="410"/><use href="#d" x="1004" y="412"/><use href="#d" x="1003" y="410"/><use href="#d" x="1004" y="411"/><use href="#d" x="1003" y="414"/><use href="#d" x="1004" y="410"/><use href="#d" x="1004" y="414"/><use href="#d" x="1003" y="409"/><use href="#d" x="1006" y="408"/><use href="#d" x="1003" y="413"/><use href="#d" x="1003" y="411"/><use href="#d" x="1003" y="415"/><use href="#d" x="1005" y="413"/><use href="#d" x="1004" y="415"/><use href="#d" x="1005" y="410"/><use href="#d" x="1002" y="410"/><use href="#d" x="1002" y="416"/><use href="#d" x="1002" y="417"/><use href="#d" x="1003" y="412"/><use href="#d" x="1005" y="412"/><use href="#d" x="1003" y="416"/><use href="#d" x="1002" y="413"/><use href="#d" x="972" y="420"/><use href="#d" x="978" y="421"/><use href="#d" x="978" y="424"/><use href="#d" x="982" y="423"/><use href="#d" x="986" y="423"/><use href="#d" x="988" y="426"/><use href="#d" x="988" y="427"/><use href="#d" x="991" y="420"/><use href="#d" x="993" y="420"/><use href="#d" x="997" y="417"/><use href="#d" x="1001" y="415"/><use href="#d" x="1003" y="420"/><use href="#d" x="1006" y="421"/><use href="#d" x="1009" y="421"/><use href="#d" x="1013" y="422"/><use href="#d" x="1014" y="426"/><use href="#d" x="999" y="431"/><use href="#d" x="998" y="430"/><use href="#d" x="995" y="435"/><use href="#d" x="984" y="439"/><use href="#d" x="987" y="431"/><use href="#d" x="1003" y="408"/><use href="#d" x="1006" y="406"/><use href="#d" x="1008" y="409"/><use href="#d" x="1009" y="403"/><use href="#d" x="1012" y="405"/><use href="#d" x="1014" y="402"/><use href="#d" x="1012" y="399"/><use href="#d" x="1014" y="396"/><use href="#d" x="1014" y="397"/><use href="#d" x="1013" y="392"/><use href="#d" x="1018" y="392"/><use href="#d" x="1018" y="386"/><use href="#d" x="1021" y="386"/><use href="#d" x="1023" y="384"/><use href="#d" x="1020" y="382"/><use href="#d" x="1364" y="67"/><use href="#d" x="1367" y="60"/><use href="#d" x="1361" y="68"/><use href="#d" x="1363" y="60"/><use href="#d" x="1365" y="60"/><use href="#d" x="1366" y="61"/><use href="#d" x="1361" y="61"/><use href="#d" x="1363" y="64"/><use href="#d" x="1366" y="73"/><use href="#d" x="1367" y="66"/><use href="#d" x="1368" y="61"/><use href="#d" x="1468" y="73"/><use href="#d" x="1468" y="63"/><use href="#d" x="1473" y="58"/><use href="#d" x="1452" y="73"/><use href="#d" x="1472" y="75"/><use href="#d" x="1441" y="70"/><use href="#d" x="1475" y="74"/><use href="#d" x="1446" y="71"/><use href="#d" x="1474" y="69"/><use href="#d" x="1465" y="59"/><use href="#d" x="1466" y="72"/><use href="#d" x="1460" y="75"/><use href="#d" x="1456" y="65"/><use href="#d" x="1440" y="61"/><use href="#d" x="1447" y="70"/><use href="#d" x="1464" y="67"/><use href="#d" x="1448" y="61"/><use href="#d" x="1464" y="75"/><use href="#d" x="1473" y="69"/><use href="#d" x="1467" y="64"/><use href="#d" x="1458" y="67"/><use href="#d" x="1471" y="68"/><use href="#d" x="1465" y="62"/><use href="#d" x="1459" y="62"/><use href="#d" x="1441" y="58"/><use href="#d" x="1457" y="76"/><use href="#d" x="1454" y="65"/><use href="#d" x="1454" y="71"/><use href="#d" x="1458" y="70"/><use href="#d" x="1471" y="62"/><use href="#d" x="1475" y="68"/><use href="#d" x="1466" y="59"/><use href="#d" x="1458" y="63"/><use href="#d" x="1465" y="64"/><use href="#d" x="1462" y="66"/><use href="#d" x="1447" y="66"/><use href="#d" x="1467" y="61"/><use href="#d" x="1451" y="69"/><use href="#d" x="1448" y="66"/><use href="#d" x="1463" y="65"/><use href="#d" x="1462" y="68"/><use href="#d" x="1462" y="62"/><use href="#d" x="1523" y="68"/><use href="#d" x="1533" y="72"/><use href="#d" x="1519" y="74"/><use href="#d" x="1537" y="76"/><use href="#d" x="1521" y="63"/><use href="#d" x="1532" y="71"/><use href="#d" x="1536" y="65"/><use href="#d" x="1516" y="67"/><use href="#d" x="1531" y="66"/><use href="#d" x="1518" y="63"/><use href="#d" x="1529" y="64"/><use href="#d" x="1530" y="71"/><use href="#d" x="1531" y="70"/><use href="#d" x="1539" y="76"/><use href="#d" x="1519" y="66"/><use href="#d" x="1530" y="77"/><use href="#d" x="1518" y="67"/><use href="#d" x="1516" y="71"/><use href="#d" x="1528" y="68"/><use href="#d" x="1522" y="69"/><use href="#d" x="1524" y="75"/><use href="#d" x="1539" y="74"/><use href="#d" x="1526" y="63"/><use href="#d" x="1530" y="63"/><use href="#d" x="1557" y="74"/><use href="#d" x="1556" y="73"/><use href="#d" x="1562" y="67"/><use href="#d" x="1550" y="76"/><use href="#d" x="1550" y="73"/><use href="#d" x="1553" y="68"/><use href="#d" x="1560" y="75"/><use href="#d" x="1558" y="71"/><use href="#d" x="1555" y="72"/><use href="#d" x="1561" y="73"/><use href="#d" x="1551" y="76"/><use href="#d" x="1550" y="75"/><use href="#d" x="1560" y="71"/><use href="#d" x="1552" y="73"/><use href="#d" x="1552" y="75"/><use href="#d" x="1550" y="78"/><use href="#d" x="1635" y="76"/><use href="#d" x="1644" y="76"/><use href="#d" x="1631" y="77"/><use href="#d" x="1645" y="79"/><use href="#d" x="1648" y="84"/><use href="#d" x="1646" y="76"/><use href="#d" x="1649" y="79"/><use href="#d" x="1639" y="81"/><use href="#d" x="1637" y="82"/><use href="#d" x="1778" y="89"/><use href="#d" x="1771" y="98"/><use href="#d" x="1773" y="92"/><use href="#d" x="1766" y="99"/><use href="#d" x="1761" y="94"/><use href="#d" x="1777" y="98"/><use href="#d" x="1774" y="101"/><use href="#d" x="1766" y="95"/><use href="#d" x="1769" y="94"/><use href="#d" x="1775" y="93"/><use href="#d" x="1772" y="95"/><use href="#d" x="1764" y="97"/><use href="#d" x="1775" y="90"/><use href="#d" x="1765" y="87"/><use href="#d" x="1766" y="87"/><use href="#d" x="1768" y="89"/><use href="#d" x="1773" y="93"/><use href="#d" x="1768" y="96"/><use href="#d" x="1772" y="94"/><use href="#d" x="1771" y="93"/><use href="#d" x="1790" y="88"/><use href="#d" x="1795" y="85"/><use href="#d" x="1793" y="89"/><use href="#d" x="1794" y="90"/><use href="#d" x="1800" y="86"/><use href="#d" x="1789" y="91"/><use href="#d" x="1799" y="87"/><use href="#d" x="1793" y="85"/><use href="#d" x="1794" y="94"/><use href="#d" x="1795" y="91"/><use href="#d" x="1797" y="89"/><use href="#d" x="1798" y="86"/><use href="#d" x="1800" y="84"/><use href="#d" x="1878" y="105"/><use href="#d" x="1880" y="103"/><use href="#d" x="1881" y="100"/><use href="#d" x="1882" y="98"/><use href="#d" x="1880" y="100"/><use href="#d" x="1882" y="97"/></g>
<path d="M1435 60h13v1h1v1h-1v1h-13v-1h-1v-1h1zM1440 55h1v-1h1v1h1v13h-1v1h-1v-1h-1z" fill="#40ff40"/>
<rect x="919" y="29" width="4" height="4" fill="#ffffff"/>
<text x="926.6" y="35" fill="#40ff40" textLength="95" lengthAdjust="spacingAndGlyphs">CG Accel Lateral [G]</text>
<text x="1051" y="35" fill="#40ff40">1.99</text>
<text x="916" y="19" fill="#000" textLength="125.5" lengthAdjust="spacingAndGlyphs">673 Samples, Zoom Linked</text>
<text x="1864.8" y="50" text-anchor="end" fill="#000">1092</text>
<text x="1316" y="469" fill="#000" textLength="97.4" lengthAdjust="spacingAndGlyphs">Tire Slip Angle FR [°]</text>
<text x="1441.3" y="469" fill="#000">6.04</text>
<rect x="53" y="482" width="1829" height="16" fill="#000"/>
<rect x="53" y="483" width="1829" height="14" fill="#505050"/>
<rect x="52" y="483" width="5" height="14" fill="#e00000"/>
<rect x="1878" y="483" width="5" height="14" fill="#e00000"/>
<rect x="53" y="499" width="1829" height="16" fill="#000"/>
<rect x="54" y="500" width="1827" height="14" fill="#505050"/>
<rect x="53" y="516" width="1829" height="335" fill="#000"/>
<rect x="54" y="517" width="1827" height="333" fill="#505050"/>
<rect x="54" y="682" width="1827" height="1" fill="#b8b8b8"/>
<rect x="54" y="683" width="1827" height="1" fill="#5c5c5c"/>
<rect x="54" y="684" width="1827" height="1" fill="#b8b8b8"/>
<text x="116.5" y="866" text-anchor="middle" fill="#000">50</text>
<text x="178.5" y="866" text-anchor="middle" fill="#000">100</text>
<text x="241.5" y="866" text-anchor="middle" fill="#000">150</text>
<text x="303.5" y="866" text-anchor="middle" fill="#000">200</text>
<text x="366.5" y="866" text-anchor="middle" fill="#000">250</text>
<text x="428.5" y="866" text-anchor="middle" fill="#000">300</text>
<text x="490.5" y="866" text-anchor="middle" fill="#000">350</text>
<text x="553.5" y="866" text-anchor="middle" fill="#000">400</text>
<text x="615.5" y="866" text-anchor="middle" fill="#000">450</text>
<text x="678.5" y="866" text-anchor="middle" fill="#000">500</text>
<text x="740.5" y="866" text-anchor="middle" fill="#000">550</text>
<text x="802.5" y="866" text-anchor="middle" fill="#000">600</text>
<text x="865.5" y="866" text-anchor="middle" fill="#000">650</text>
<text x="927.5" y="866" text-anchor="middle" fill="#000">700</text>
<text x="990.5" y="866" text-anchor="middle" fill="#000">750</text>
<text x="1052.5" y="866" text-anchor="middle" fill="#000">800</text>
<text x="1115.5" y="866" text-anchor="middle" fill="#000">850</text>
<text x="1177.5" y="866" text-anchor="middle" fill="#000">900</text>
<text x="1239.5" y="866" text-anchor="middle" fill="#000">950</text>
<text x="1302.5" y="866" text-anchor="middle" fill="#000">1000</text>
<text x="1364.5" y="866" text-anchor="middle" fill="#000">1050</text>
<text x="1427.5" y="866" text-anchor="middle" fill="#000">1100</text>
<text x="1489.5" y="866" text-anchor="middle" fill="#000">1150</text>
<text x="1551.5" y="866" text-anchor="middle" fill="#000">1200</text>
<text x="1614.5" y="866" text-anchor="middle" fill="#000">1250</text>
<text x="1676.5" y="866" text-anchor="middle" fill="#000">1300</text>
<text x="1739.5" y="866" text-anchor="middle" fill="#000">1350</text>
<text x="1801.5" y="866" text-anchor="middle" fill="#000">1400</text>
<text x="1864.5" y="866" text-anchor="middle" fill="#000">1450</text>
<text x="43.6" y="679" text-anchor="end" fill="#000">1000</text>
<text x="43.6" y="658" text-anchor="end" fill="#000">2000</text>
<text x="43.6" y="638" text-anchor="end" fill="#000">3000</text>
<text x="43.6" y="617" text-anchor="end" fill="#000">4000</text>
<text x="43.6" y="597" text-anchor="end" fill="#000">5000</text>
<text x="43.6" y="576" text-anchor="end" fill="#000">6000</text>
<text x="43.6" y="556" text-anchor="end" fill="#000">7000</text>
<text x="43.6" y="535" text-anchor="end" fill="#000">8000</text>
<text x="43.8" y="704" text-anchor="end" fill="#000">-1.5</text>
<text x="43.8" y="726" text-anchor="end" fill="#000">-2.0</text>
<text x="43.8" y="748" text-anchor="end" fill="#000">-2.5</text>
<text x="43.8" y="769" text-anchor="end" fill="#000">-3.0</text>
<text x="43.8" y="791" text-anchor="end" fill="#000">-3.5</text>
<text x="43.8" y="812" text-anchor="end" fill="#000">-4.0</text>
<text x="43.8" y="834" text-anchor="end" fill="#000">-4.5</text>
<path d="M116 851h1v3h-1zM178 851h1v3h-1zM241 851h1v3h-1zM303 851h1v3h-1zM366 851h1v3h-1zM428 851h1v3h-1zM490 851h1v3h-1zM553 851h1v3h-1zM615 851h1v3h-1zM678 851h1v3h-1zM740 851h1v3h-1zM802 851h1v3h-1zM865 851h1v3h-1zM927 851h1v3h-1zM990 851h1v3h-1zM1052 851h1v3h-1zM1115 851h1v3h-1zM1177 851h1v3h-1zM1239 851h1v3h-1zM1302 851h1v3h-1zM1364 851h1v3h-1zM1427 851h1v3h-1zM1489 851h1v3h-1zM1551 851h1v3h-1zM1614 851h1v3h-1zM1676 851h1v3h-1zM1739 851h1v3h-1zM1801 851h1v3h-1zM1864 851h1v3h-1zM69 851h1v2h-1zM85 851h1v2h-1zM100 851h1v2h-1zM132 851h1v2h-1zM147 851h1v2h-1zM163 851h1v2h-1zM194 851h1v2h-1zM210 851h1v2h-1zM225 851h1v2h-1zM256 851h1v2h-1zM272 851h1v2h-1zM288 851h1v2h-1zM319 851h1v2h-1zM334 851h1v2h-1zM350 851h1v2h-1zM381 851h1v2h-1zM397 851h1v2h-1zM412 851h1v2h-1zM444 851h1v2h-1zM459 851h1v2h-1zM475 851h1v2h-1zM506 851h1v2h-1zM522 851h1v2h-1zM537 851h1v2h-1zM568 851h1v2h-1zM584 851h1v2h-1zM600 851h1v2h-1zM631 851h1v2h-1zM646 851h1v2h-1zM662 851h1v2h-1zM693 851h1v2h-1zM709 851h1v2h-1zM724 851h1v2h-1zM756 851h1v2h-1zM771 851h1v2h-1zM787 851h1v2h-1zM818 851h1v2h-1zM834 851h1v2h-1zM849 851h1v2h-1zM880 851h1v2h-1zM896 851h1v2h-1zM912 851h1v2h-1zM943 851h1v2h-1zM959 851h1v2h-1zM974 851h1v2h-1zM1005 851h1v2h-1zM1021 851h1v2h-1zM1037 851h1v2h-1zM1068 851h1v2h-1zM1083 851h1v2h-1zM1099 851h1v2h-1zM1130 851h1v2h-1zM1146 851h1v2h-1zM1161 851h1v2h-1zM1193 851h1v2h-1zM1208 851h1v2h-1zM1224 851h1v2h-1zM1255 851h1v2h-1zM1271 851h1v2h-1zM1286 851h1v2h-1zM1317 851h1v2h-1zM1333 851h1v2h-1zM1349 851h1v2h-1zM1380 851h1v2h-1zM1395 851h1v2h-1zM1411 851h1v2h-1zM1442 851h1v2h-1zM1458 851h1v2h-1zM1473 851h1v2h-1zM1505 851h1v2h-1zM1520 851h1v2h-1zM1536 851h1v2h-1zM1567 851h1v2h-1zM1583 851h1v2h-1zM1598 851h1v2h-1zM1629 851h1v2h-1zM1645 851h1v2h-1zM1661 851h1v2h-1zM1692 851h1v2h-1zM1707 851h1v2h-1zM1723 851h1v2h-1zM1754 851h1v2h-1zM1770 851h1v2h-1zM1786 851h1v2h-1zM1817 851h1v2h-1zM1832 851h1v2h-1zM1848 851h1v2h-1zM1879 851h1v2h-1zM46 675h7v1h-7zM46 654h7v1h-7zM46 634h7v1h-7zM46 613h7v1h-7zM46 593h7v1h-7zM46 572h7v1h-7zM46 552h7v1h-7zM46 531h7v1h-7zM50 680h3v1h-3zM50 669h3v1h-3zM50 664h3v1h-3zM50 659h3v1h-3zM50 649h3v1h-3zM50 644h3v1h-3zM50 639h3v1h-3zM50 628h3v1h-3zM50 623h3v1h-3zM50 618h3v1h-3zM50 608h3v1h-3zM50 603h3v1h-3zM50 598h3v1h-3zM50 587h3v1h-3zM50 582h3v1h-3zM50 577h3v1h-3zM50 567h3v1h-3zM50 562h3v1h-3zM50 557h3v1h-3zM50 546h3v1h-3zM50 541h3v1h-3zM50 536h3v1h-3zM50 526h3v1h-3zM50 521h3v1h-3zM46 700h7v1h-7zM46 722h7v1h-7zM46 744h7v1h-7zM46 765h7v1h-7zM46 787h7v1h-7zM46 808h7v1h-7zM46 830h7v1h-7zM50 690h3v1h-3zM50 695h3v1h-3zM50 706h3v1h-3zM50 711h3v1h-3zM50 717h3v1h-3zM50 727h3v1h-3zM50 733h3v1h-3zM50 738h3v1h-3zM50 749h3v1h-3zM50 754h3v1h-3zM50 760h3v1h-3zM50 771h3v1h-3zM50 776h3v1h-3zM50 781h3v1h-3zM50 792h3v1h-3zM50 798h3v1h-3zM50 803h3v1h-3zM50 814h3v1h-3zM50 819h3v1h-3zM50 825h3v1h-3zM50 835h3v1h-3zM50 841h3v1h-3zM50 846h3v1h-3z" fill="#000"/>
<path d="M116.5 517V682M116.5 685V850M178.5 517V682M178.5 685V850M241.5 517V682M241.5 685V850M303.5 517V682M303.5 685V850M366.5 517V682M366.5 685V850M428.5 517V682M428.5 685V850M490.5 517V682M490.5 685V850M553.5 517V682M553.5 685V850M615.5 517V682M615.5 685V850M678.5 517V682M678.5 685V850M740.5 517V682M740.5 685V850M802.5 517V682M802.5 685V850M865.5 517V682M865.5 685V850M927.5 517V682M927.5 685V850M990.5 517V682M990.5 685V850M1052.5 517V682M1052.5 685V850M1115.5 517V682M1115.5 685V850M1177.5 517V682M1177.5 685V850M1239.5 517V682M1239.5 685V850M1302.5 517V682M1302.5 685V850M1364.5 517V682M1364.5 685V850M1427.5 517V682M1427.5 685V850M1489.5 517V682M1489.5 685V850M1551.5 517V682M1551.5 685V850M1614.5 517V682M1614.5 685V850M1676.5 517V682M1676.5 685V850M1739.5 517V682M1739.5 685V850M1801.5 517V682M1801.5 685V850M1864.5 517V682M1864.5 685V850M56 675.5H1881M56 654.5H1881M56 634.5H1881M56 613.5H1881M56 593.5H1881M56 572.5H1881M56 552.5H1881M56 531.5H1881M56 700.5H1881M56 722.5H1881M56 744.5H1881M56 765.5H1881M56 787.5H1881M56 808.5H1881M56 830.5H1881" stroke="#787878" stroke-width="1" stroke-dasharray="1 1" fill="none"/>
<path d="M54.5 500V514M54.5 517V850" stroke="#e00000" stroke-width="1" stroke-dasharray="3 3" fill="none"/>
<path d="M1880.5 500V514M1880.5 517V850" stroke="#e00000" stroke-width="1" stroke-dasharray="3 3" fill="none"/>
<rect x="54" y="517" width="178" height="54" fill="#505050" opacity="0.55"/>
<rect x="54" y="685" width="178" height="54" fill="#505050" opacity="0.55"/>
<clipPath id="cT"><rect x="54" y="517" width="1827" height="165"/></clipPath>
<clipPath id="cC"><rect x="232" y="685" width="1649" height="165"/></clipPath>
<clipPath id="cL"><rect x="54" y="685" width="178" height="165"/></clipPath>
<path d="M54.5 636.5L54.5 658.5L54.5 649.5L55.5 649.5L55.5 642.5L56.5 642.5L56.5 650.5L57.5 648.5L58.5 648.5L60.5 642.5L61.5 650.5L62.5 646.5L64.5 648.5L65.5 650.5L67.5 651.5L70.5 650.5L72.5 651.5L76.5 651.5L78.5 650.5L80.5 651.5L85.5 650.5L88.5 648.5L92.5 648.5L99.5 646.5L100.5 632.5L101.5 614.5L103.5 628.5L104.5 642.5L106.5 650.5L108.5 632.5L110.5 639.5L111.5 646.5L113.5 640.5L114.5 637.5L116.5 641.5L118.5 643.5L120.5 640.5L122.5 642.5L125.5 641.5L130.5 640.5L140.5 637.5L150.5 636.5L153.5 633.5L154.5 617.5L156.5 624.5L158.5 632.5L161.5 638.5L163.5 632.5L164.5 629.5L166.5 634.5L168.5 636.5L171.5 632.5L174.5 634.5L177.5 632.5L180.5 633.5L185.5 633.5L192.5 632.5L200.5 631.5L207.5 631.5L214.5 629.5L221.5 629.5L228.5 629.5L235.5 628.5L242.5 626.5L250.5 626.5L256.5 625.5L258.5 617.5L259.5 610.5L261.5 614.5L263.5 620.5L265.5 623.5L268.5 624.5L271.5 622.5L273.5 621.5L275.5 622.5L278.5 623.5L285.5 623.5L292.5 622.5L300.5 622.5L307.5 621.5L314.5 621.5L321.5 621.5L328.5 620.5L335.5 620.5L342.5 619.5L350.5 619.5L357.5 619.5L364.5 618.5L371.5 618.5L378.5 618.5L385.5 616.5L392.5 617.5L399.5 616.5L406.5 616.5L413.5 616.5L420.5 616.5L428.5 615.5L435.5 615.5L443.5 614.5L451.5 614.5L459.5 614.5L466.5 613.5L474.5 613.5L482.5 613.5L490.5 612.5L497.5 612.5L504.5 611.5L511.5 611.5L518.5 611.5L525.5 611.5L532.5 611.5L539.5 611.5L546.5 610.5L553.5 610.5L560.5 610.5L567.5 610.5L570.5 609.5L572.5 607.5L575.5 603.5L580.5 604.5L585.5 605.5L595.5 604.5L605.5 603.5L612.5 604.5L620.5 604.5L630.5 604.5L640.5 605.5L650.5 605.5L655.5 604.5L662.5 604.5L668.5 606.5L676.5 606.5L684.5 607.5L692.5 607.5L700.5 607.5L707.5 607.5L715.5 606.5L722.5 608.5L730.5 608.5L737.5 608.5L745.5 608.5L753.5 608.5L762.5 608.5L767.5 610.5L774.5 611.5L781.5 610.5L788.5 611.5L794.5 613.5L802.5 615.5L806.5 618.5L812.5 618.5L818.5 622.5L823.5 624.5L832.5 631.5L837.5 633.5L846.5 636.5L853.5 636.5L857.5 637.5L864.5 637.5L875.5 641.5L882.5 642.5L889.5 647.5L894.5 647.5L900.5 652.5L910.5 653.5L920.5 656.5L927.5 656.5L937.5 659.5L950.5 662.5L953.5 663.5L957.5 663.5L965.5 666.5L972.5 666.5L976.5 668.5L983.5 668.5L987.5 670.5L991.5 668.5L995.5 670.5L998.5 668.5L1002.5 672.5L1006.5 666.5L1012.5 673.5L1016.5 665.5L1019.5 671.5L1023.5 672.5L1027.5 665.5L1030.5 672.5L1038.5 666.5L1041.5 674.5L1044.5 666.5L1049.5 673.5L1052.5 672.5L1055.5 666.5L1059.5 674.5L1063.5 668.5L1066.5 669.5L1070.5 673.5L1073.5 666.5L1080.5 675.5L1085.5 670.5L1088.5 671.5L1092.5 667.5L1095.5 667.5L1098.5 674.5L1100.5 672.5L1103.5 670.5L1110.5 670.5L1113.5 668.5L1117.5 672.5L1120.5 667.5L1123.5 671.5L1127.5 671.5L1131.5 666.5L1134.5 675.5L1142.5 667.5L1145.5 675.5L1149.5 669.5L1152.5 667.5L1156.5 675.5L1159.5 671.5L1166.5 670.5L1170.5 665.5L1173.5 671.5L1177.5 672.5L1181.5 669.5L1184.5 671.5L1192.5 670.5L1195.5 668.5L1199.5 668.5L1203.5 672.5L1206.5 666.5L1210.5 672.5L1213.5 674.5L1217.5 665.5L1220.5 674.5L1224.5 674.5L1227.5 669.5L1231.5 672.5L1238.5 666.5L1242.5 674.5L1246.5 670.5L1250.5 670.5L1255.5 668.5L1260.5 666.5L1264.5 673.5L1267.5 671.5L1270.5 669.5L1275.5 668.5L1278.5 665.5L1282.5 671.5L1286.5 671.5L1290.5 668.5L1293.5 671.5L1297.5 666.5L1300.5 669.5L1303.5 673.5L1307.5 670.5L1310.5 668.5L1315.5 670.5L1320.5 669.5L1330.5 669.5L1335.5 665.5L1338.5 668.5L1340.5 672.5L1345.5 669.5L1350.5 668.5L1354.5 664.5L1358.5 668.5L1361.5 671.5L1366.5 668.5L1372.5 669.5L1380.5 668.5L1387.5 668.5L1394.5 668.5L1402.5 668.5L1406.5 664.5L1409.5 667.5L1411.5 671.5L1415.5 666.5L1420.5 669.5L1425.5 668.5L1433.5 667.5L1441.5 667.5L1449.5 667.5L1457.5 667.5L1462.5 662.5L1466.5 666.5L1469.5 670.5L1473.5 667.5L1480.5 667.5L1489.5 667.5L1491.5 666.5L1500.5 666.5L1509.5 666.5L1518.5 666.5L1520.5 667.5L1522.5 666.5L1529.5 666.5L1536.5 666.5L1543.5 666.5L1550.5 666.5L1557.5 666.5L1565.5 665.5L1573.5 665.5L1580.5 666.5L1588.5 665.5L1596.5 667.5L1604.5 666.5L1609.5 667.5L1613.5 663.5L1617.5 667.5L1620.5 671.5L1625.5 668.5L1630.5 667.5L1634.5 664.5L1639.5 670.5L1644.5 668.5L1648.5 668.5L1650.5 669.5L1653.5 663.5L1656.5 666.5L1660.5 673.5L1664.5 663.5L1667.5 668.5L1670.5 675.5L1674.5 665.5L1678.5 669.5L1682.5 673.5L1685.5 666.5L1688.5 669.5L1691.5 673.5L1695.5 671.5L1698.5 670.5L1703.5 668.5L1706.5 670.5L1711.5 673.5L1714.5 666.5L1718.5 670.5L1721.5 674.5L1725.5 665.5L1729.5 672.5L1732.5 669.5L1735.5 665.5L1739.5 673.5L1744.5 664.5L1747.5 663.5L1750.5 670.5L1754.5 666.5L1757.5 662.5L1762.5 660.5L1767.5 654.5L1771.5 642.5L1776.5 640.5L1780.5 634.5L1782.5 626.5L1787.5 626.5L1790.5 615.5L1794.5 613.5L1797.5 614.5L1803.5 611.5L1811.5 609.5L1820.5 606.5L1823.5 602.5L1827.5 604.5L1835.5 604.5L1840.5 605.5L1848.5 606.5L1857.5 605.5L1866.5 606.5L1869.5 606.5L1880.5 606.5" stroke="#ff66dd" stroke-width="1" fill="none" clip-path="url(#cT)"/>
<path d="M54.5 636.5L54.5 659.5L54.5 650.5L55.5 650.5L55.5 642.5L56.5 642.5L56.5 651.5L57.5 648.5L58.5 648.5L60.5 642.5L61.5 652.5L62.5 648.5L64.5 649.5L65.5 650.5L67.5 651.5L72.5 652.5L80.5 652.5L85.5 651.5L92.5 650.5L99.5 648.5L100.5 640.5L101.5 623.5L103.5 636.5L104.5 648.5L106.5 656.5L108.5 634.5L110.5 642.5L111.5 650.5L113.5 644.5L114.5 640.5L116.5 645.5L118.5 647.5L120.5 644.5L122.5 646.5L125.5 645.5L130.5 644.5L140.5 642.5L150.5 640.5L153.5 638.5L154.5 620.5L156.5 628.5L158.5 638.5L161.5 644.5L163.5 636.5L164.5 631.5L166.5 637.5L168.5 640.5L171.5 636.5L174.5 639.5L177.5 636.5L180.5 638.5L185.5 637.5L192.5 636.5L200.5 635.5L207.5 635.5L214.5 634.5L221.5 634.5L228.5 634.5L235.5 633.5L242.5 632.5L250.5 632.5L256.5 631.5L258.5 622.5L259.5 613.5L261.5 618.5L263.5 626.5L265.5 630.5L268.5 632.5L271.5 629.5L275.5 629.5L278.5 630.5L285.5 629.5L292.5 629.5L300.5 629.5L307.5 628.5L314.5 629.5L321.5 627.5L328.5 627.5L335.5 627.5L342.5 626.5L350.5 626.5L357.5 626.5L364.5 625.5L371.5 624.5L378.5 624.5L385.5 623.5L392.5 623.5L399.5 623.5L406.5 622.5L413.5 621.5L420.5 621.5L428.5 621.5L435.5 620.5L443.5 620.5L451.5 620.5L459.5 619.5L466.5 618.5L474.5 618.5L482.5 618.5L490.5 618.5L497.5 617.5L504.5 617.5L511.5 617.5L518.5 616.5L525.5 616.5L532.5 615.5L539.5 615.5L546.5 615.5L553.5 615.5L560.5 614.5L567.5 614.5L570.5 614.5L572.5 613.5L575.5 609.5L580.5 611.5L590.5 610.5L600.5 610.5L610.5 610.5L620.5 609.5L627.5 609.5L635.5 610.5L642.5 610.5L650.5 610.5L660.5 608.5L670.5 606.5L680.5 606.5L690.5 607.5L697.5 607.5L705.5 607.5L712.5 607.5L720.5 607.5L728.5 607.5L736.5 606.5L745.5 607.5L755.5 605.5L762.5 603.5L770.5 603.5L777.5 602.5L785.5 601.5L792.5 600.5L800.5 599.5L808.5 595.5L814.5 595.5L821.5 589.5L826.5 589.5L831.5 582.5L837.5 579.5L843.5 577.5L850.5 578.5L864.5 578.5L872.5 575.5L880.5 571.5L893.5 566.5L905.5 562.5L915.5 559.5L927.5 557.5L937.5 557.5L945.5 553.5L950.5 553.5L958.5 549.5L962.5 548.5L967.5 549.5L972.5 547.5L977.5 547.5L980.5 549.5L984.5 548.5L987.5 549.5L991.5 547.5L993.5 548.5L998.5 548.5L1001.5 552.5L1005.5 547.5L1012.5 552.5L1016.5 548.5L1019.5 551.5L1023.5 552.5L1026.5 548.5L1030.5 551.5L1035.5 548.5L1038.5 548.5L1041.5 551.5L1045.5 547.5L1048.5 550.5L1052.5 547.5L1056.5 548.5L1059.5 551.5L1062.5 546.5L1067.5 549.5L1070.5 549.5L1073.5 545.5L1080.5 553.5L1084.5 552.5L1092.5 545.5L1098.5 552.5L1103.5 552.5L1100.5 552.5L1103.5 552.5L1109.5 546.5L1113.5 549.5L1117.5 550.5L1120.5 546.5L1123.5 550.5L1129.5 547.5L1131.5 547.5L1134.5 551.5L1138.5 546.5L1141.5 546.5L1145.5 552.5L1148.5 547.5L1152.5 546.5L1156.5 553.5L1160.5 553.5L1164.5 548.5L1168.5 547.5L1170.5 544.5L1177.5 553.5L1179.5 553.5L1184.5 550.5L1188.5 552.5L1192.5 551.5L1195.5 546.5L1203.5 551.5L1206.5 546.5L1210.5 550.5L1213.5 552.5L1217.5 545.5L1221.5 550.5L1224.5 552.5L1228.5 551.5L1236.5 546.5L1238.5 547.5L1242.5 553.5L1246.5 553.5L1250.5 551.5L1254.5 550.5L1260.5 546.5L1263.5 553.5L1268.5 553.5L1273.5 549.5L1277.5 545.5L1281.5 549.5L1285.5 552.5L1290.5 551.5L1296.5 544.5L1300.5 549.5L1303.5 552.5L1307.5 551.5L1311.5 552.5L1319.5 552.5L1328.5 552.5L1334.5 547.5L1337.5 548.5L1340.5 553.5L1345.5 553.5L1350.5 549.5L1353.5 545.5L1357.5 549.5L1361.5 553.5L1366.5 551.5L1369.5 552.5L1373.5 552.5L1382.5 552.5L1391.5 552.5L1400.5 552.5L1404.5 546.5L1408.5 549.5L1412.5 553.5L1416.5 553.5L1420.5 551.5L1425.5 552.5L1432.5 551.5L1440.5 552.5L1448.5 552.5L1456.5 552.5L1461.5 545.5L1465.5 550.5L1469.5 554.5L1473.5 553.5L1476.5 551.5L1480.5 552.5L1487.5 553.5L1494.5 552.5L1501.5 552.5L1508.5 552.5L1515.5 552.5L1522.5 553.5L1529.5 552.5L1536.5 553.5L1543.5 553.5L1550.5 552.5L1557.5 552.5L1565.5 552.5L1573.5 552.5L1581.5 553.5L1589.5 552.5L1597.5 553.5L1605.5 553.5L1609.5 551.5L1613.5 545.5L1617.5 550.5L1620.5 554.5L1624.5 552.5L1628.5 550.5L1632.5 545.5L1636.5 547.5L1641.5 553.5L1646.5 553.5L1650.5 550.5L1653.5 546.5L1657.5 550.5L1660.5 553.5L1664.5 546.5L1668.5 549.5L1671.5 552.5L1675.5 548.5L1678.5 549.5L1682.5 552.5L1686.5 546.5L1689.5 550.5L1692.5 554.5L1696.5 551.5L1700.5 550.5L1703.5 548.5L1707.5 550.5L1710.5 553.5L1714.5 547.5L1718.5 550.5L1721.5 553.5L1725.5 549.5L1728.5 552.5L1732.5 550.5L1736.5 553.5L1739.5 555.5L1744.5 551.5L1747.5 554.5L1750.5 559.5L1753.5 561.5L1757.5 560.5L1762.5 566.5L1767.5 571.5L1771.5 571.5L1775.5 580.5L1779.5 588.5L1785.5 597.5L1790.5 600.5L1798.5 603.5L1805.5 605.5L1809.5 603.5L1813.5 604.5L1818.5 602.5L1823.5 599.5L1827.5 600.5L1835.5 599.5L1843.5 600.5L1851.5 601.5L1860.5 601.5L1864.5 602.5L1872.5 602.5L1880.5 602.5" stroke="#ff0000" stroke-width="1" fill="none" clip-path="url(#cT)"/>
<path d="M54.5 634.5L54.5 607.5L55.5 607.5L57.5 606.5L59.5 607.5L60.5 608.5L61.5 607.5L61.5 604.5L62.5 606.5L64.5 605.5L66.5 602.5L70.5 601.5L75.5 600.5L80.5 600.5L85.5 599.5L90.5 600.5L99.5 600.5L100.5 612.5L101.5 622.5L103.5 610.5L105.5 600.5L107.5 603.5L109.5 599.5L112.5 601.5L116.5 599.5L125.5 598.5L133.5 598.5L141.5 598.5L150.5 597.5L153.5 600.5L154.5 618.5L156.5 606.5L158.5 598.5L160.5 596.5L163.5 600.5L166.5 597.5L175.5 596.5L183.5 595.5L191.5 595.5L200.5 595.5L207.5 594.5L214.5 594.5L221.5 595.5L228.5 593.5L235.5 593.5L242.5 593.5L250.5 593.5L256.5 592.5L258.5 598.5L259.5 606.5L261.5 600.5L263.5 593.5L265.5 590.5L268.5 593.5L270.5 596.5L274.5 593.5L280.5 593.5L290.5 593.5L300.5 591.5L307.5 591.5L314.5 590.5L321.5 590.5L328.5 589.5L335.5 589.5L342.5 589.5L350.5 588.5L357.5 587.5L364.5 587.5L371.5 588.5L378.5 586.5L385.5 586.5L392.5 586.5L399.5 585.5L406.5 585.5L413.5 585.5L420.5 584.5L428.5 584.5L435.5 584.5L443.5 583.5L451.5 583.5L459.5 582.5L467.5 581.5L475.5 582.5L482.5 580.5L490.5 581.5L498.5 581.5L505.5 580.5L513.5 581.5L521.5 581.5L528.5 580.5L536.5 580.5L544.5 579.5L551.5 579.5L559.5 579.5L567.5 579.5L570.5 579.5L574.5 581.5L578.5 583.5L590.5 584.5L592.5 583.5L594.5 580.5L600.5 580.5L611.5 582.5L613.5 581.5L615.5 584.5L629.5 584.5L631.5 583.5L640.5 583.5L650.5 582.5L655.5 585.5L660.5 581.5L666.5 585.5L671.5 583.5L680.5 586.5L690.5 585.5L700.5 586.5L704.5 587.5L715.5 587.5L728.5 587.5L735.5 586.5L738.5 583.5L744.5 586.5L750.5 585.5L756.5 585.5L767.5 588.5L775.5 590.5L783.5 591.5L787.5 589.5L794.5 594.5L802.5 595.5L812.5 598.5L820.5 604.5L826.5 605.5L832.5 611.5L839.5 614.5L853.5 615.5L865.5 612.5L871.5 614.5L880.5 620.5L890.5 625.5L902.5 629.5L916.5 629.5L926.5 634.5L933.5 634.5L937.5 631.5L941.5 635.5L946.5 638.5L950.5 638.5L952.5 637.5L956.5 637.5L959.5 640.5L962.5 640.5L965.5 643.5L969.5 640.5L972.5 641.5L976.5 645.5L980.5 641.5L983.5 641.5L987.5 644.5L991.5 641.5L995.5 645.5L998.5 640.5L1002.5 639.5L1005.5 641.5L1009.5 638.5L1012.5 642.5L1016.5 640.5L1019.5 638.5L1023.5 643.5L1026.5 639.5L1030.5 638.5L1034.5 643.5L1037.5 639.5L1039.5 639.5L1041.5 641.5L1045.5 641.5L1048.5 639.5L1052.5 645.5L1055.5 639.5L1059.5 640.5L1062.5 644.5L1066.5 640.5L1070.5 645.5L1073.5 644.5L1077.5 641.5L1080.5 638.5L1085.5 638.5L1088.5 640.5L1092.5 644.5L1095.5 640.5L1100.5 638.5L1102.5 637.5L1106.5 639.5L1109.5 647.5L1111.5 641.5L1114.5 639.5L1123.5 639.5L1127.5 646.5L1131.5 641.5L1134.5 640.5L1138.5 645.5L1141.5 641.5L1145.5 640.5L1148.5 645.5L1156.5 638.5L1160.5 637.5L1163.5 640.5L1166.5 646.5L1168.5 645.5L1176.5 637.5L1182.5 637.5L1184.5 639.5L1188.5 637.5L1192.5 637.5L1195.5 646.5L1199.5 639.5L1201.5 639.5L1206.5 642.5L1210.5 639.5L1213.5 641.5L1217.5 643.5L1220.5 639.5L1223.5 638.5L1229.5 638.5L1231.5 640.5L1235.5 646.5L1238.5 640.5L1242.5 638.5L1245.5 636.5L1250.5 638.5L1253.5 639.5L1257.5 644.5L1262.5 639.5L1267.5 636.5L1270.5 639.5L1274.5 646.5L1279.5 641.5L1284.5 637.5L1290.5 638.5L1296.5 644.5L1300.5 640.5L1303.5 637.5L1310.5 637.5L1320.5 637.5L1328.5 636.5L1332.5 644.5L1336.5 639.5L1340.5 635.5L1345.5 636.5L1348.5 639.5L1351.5 643.5L1354.5 640.5L1358.5 636.5L1363.5 635.5L1366.5 637.5L1370.5 635.5L1377.5 635.5L1385.5 635.5L1393.5 635.5L1401.5 635.5L1405.5 643.5L1407.5 640.5L1410.5 636.5L1414.5 635.5L1418.5 636.5L1425.5 635.5L1432.5 635.5L1440.5 635.5L1447.5 636.5L1455.5 635.5L1458.5 640.5L1460.5 641.5L1462.5 640.5L1465.5 635.5L1470.5 635.5L1473.5 636.5L1478.5 634.5L1485.5 634.5L1492.5 634.5L1500.5 634.5L1503.5 633.5L1505.5 634.5L1512.5 634.5L1520.5 634.5L1527.5 634.5L1535.5 634.5L1542.5 633.5L1550.5 634.5L1557.5 633.5L1564.5 633.5L1571.5 634.5L1578.5 633.5L1585.5 633.5L1592.5 634.5L1600.5 633.5L1607.5 636.5L1610.5 639.5L1613.5 642.5L1616.5 638.5L1619.5 634.5L1624.5 634.5L1628.5 638.5L1631.5 643.5L1634.5 640.5L1638.5 636.5L1643.5 634.5L1647.5 635.5L1650.5 637.5L1654.5 640.5L1657.5 637.5L1660.5 635.5L1663.5 638.5L1665.5 640.5L1669.5 641.5L1672.5 639.5L1675.5 638.5L1679.5 638.5L1682.5 641.5L1687.5 638.5L1692.5 636.5L1696.5 637.5L1699.5 638.5L1703.5 643.5L1706.5 640.5L1709.5 636.5L1713.5 642.5L1717.5 638.5L1720.5 639.5L1723.5 640.5L1728.5 638.5L1732.5 642.5L1736.5 636.5L1739.5 636.5L1743.5 640.5L1746.5 636.5L1749.5 631.5L1753.5 629.5L1757.5 628.5L1762.5 624.5L1767.5 619.5L1771.5 617.5L1775.5 610.5L1779.5 609.5L1783.5 598.5L1787.5 596.5L1791.5 591.5L1797.5 591.5L1801.5 587.5L1805.5 588.5L1809.5 587.5L1813.5 588.5L1820.5 592.5L1823.5 593.5L1835.5 592.5L1838.5 593.5L1845.5 592.5L1852.5 594.5L1859.5 593.5L1866.5 593.5L1869.5 594.5L1880.5 594.5" stroke="#33ffff" stroke-width="1" fill="none" clip-path="url(#cT)"/>
<path d="M54.5 598.5L54.5 635.5L54.5 611.5L55.5 611.5L55.5 607.5L57.5 607.5L59.5 608.5L60.5 609.5L61.5 608.5L61.5 604.5L62.5 607.5L64.5 606.5L66.5 603.5L70.5 602.5L75.5 601.5L77.5 602.5L80.5 601.5L90.5 600.5L99.5 601.5L100.5 612.5L101.5 623.5L103.5 611.5L105.5 601.5L107.5 604.5L109.5 600.5L112.5 602.5L116.5 600.5L125.5 599.5L133.5 599.5L141.5 598.5L150.5 598.5L153.5 601.5L154.5 619.5L156.5 607.5L158.5 599.5L160.5 598.5L163.5 601.5L166.5 598.5L175.5 598.5L183.5 596.5L191.5 598.5L200.5 597.5L207.5 597.5L214.5 596.5L221.5 596.5L228.5 595.5L235.5 596.5L242.5 596.5L250.5 595.5L256.5 594.5L258.5 599.5L259.5 607.5L261.5 601.5L263.5 596.5L265.5 593.5L268.5 595.5L270.5 597.5L274.5 595.5L280.5 595.5L290.5 594.5L300.5 594.5L307.5 594.5L314.5 594.5L321.5 593.5L328.5 592.5L335.5 593.5L342.5 592.5L350.5 592.5L357.5 591.5L364.5 592.5L371.5 591.5L378.5 592.5L385.5 591.5L392.5 590.5L399.5 590.5L406.5 589.5L413.5 590.5L420.5 590.5L428.5 589.5L435.5 588.5L443.5 588.5L451.5 588.5L459.5 588.5L466.5 587.5L474.5 587.5L482.5 586.5L490.5 586.5L497.5 586.5L504.5 585.5L511.5 586.5L518.5 585.5L525.5 584.5L532.5 584.5L539.5 583.5L546.5 584.5L553.5 583.5L560.5 583.5L567.5 583.5L571.5 584.5L575.5 587.5L578.5 589.5L590.5 590.5L592.5 589.5L594.5 586.5L605.5 586.5L612.5 588.5L614.5 588.5L616.5 590.5L630.5 590.5L633.5 589.5L640.5 588.5L650.5 587.5L655.5 590.5L659.5 587.5L663.5 585.5L666.5 587.5L670.5 584.5L680.5 584.5L690.5 586.5L700.5 586.5L704.5 588.5L715.5 587.5L728.5 586.5L735.5 585.5L738.5 584.5L744.5 586.5L750.5 582.5L760.5 583.5L767.5 582.5L776.5 582.5L785.5 582.5L788.5 580.5L792.5 582.5L800.5 580.5L806.5 576.5L812.5 575.5L818.5 571.5L822.5 570.5L828.5 564.5L835.5 560.5L845.5 559.5L853.5 558.5L861.5 556.5L870.5 555.5L882.5 553.5L894.5 548.5L900.5 545.5L912.5 541.5L920.5 539.5L927.5 540.5L940.5 536.5L950.5 535.5L961.5 532.5L969.5 530.5L977.5 531.5L984.5 528.5L987.5 530.5L992.5 529.5L995.5 531.5L998.5 528.5L1003.5 528.5L1006.5 530.5L1009.5 527.5L1012.5 530.5L1016.5 530.5L1019.5 526.5L1023.5 532.5L1026.5 529.5L1030.5 526.5L1034.5 534.5L1037.5 529.5L1041.5 528.5L1044.5 533.5L1048.5 526.5L1052.5 532.5L1055.5 530.5L1059.5 526.5L1062.5 532.5L1067.5 527.5L1070.5 532.5L1073.5 533.5L1077.5 526.5L1080.5 526.5L1084.5 530.5L1088.5 528.5L1091.5 532.5L1095.5 528.5L1099.5 526.5L1102.5 530.5L1106.5 530.5L1100.5 527.5L1102.5 530.5L1106.5 530.5L1109.5 533.5L1112.5 529.5L1123.5 527.5L1127.5 532.5L1134.5 527.5L1138.5 533.5L1141.5 528.5L1145.5 527.5L1148.5 534.5L1152.5 528.5L1156.5 527.5L1160.5 530.5L1163.5 529.5L1166.5 533.5L1169.5 533.5L1174.5 527.5L1177.5 530.5L1181.5 532.5L1184.5 529.5L1188.5 530.5L1192.5 530.5L1195.5 534.5L1199.5 528.5L1203.5 529.5L1206.5 532.5L1210.5 527.5L1213.5 530.5L1217.5 533.5L1221.5 526.5L1224.5 528.5L1227.5 531.5L1231.5 529.5L1235.5 534.5L1238.5 529.5L1242.5 528.5L1245.5 531.5L1250.5 531.5L1253.5 531.5L1256.5 535.5L1260.5 530.5L1264.5 529.5L1268.5 531.5L1274.5 535.5L1278.5 531.5L1282.5 527.5L1286.5 531.5L1290.5 532.5L1293.5 530.5L1296.5 534.5L1300.5 528.5L1304.5 529.5L1307.5 533.5L1310.5 532.5L1317.5 532.5L1325.5 532.5L1328.5 533.5L1332.5 536.5L1335.5 533.5L1338.5 530.5L1342.5 532.5L1347.5 533.5L1351.5 536.5L1354.5 533.5L1357.5 530.5L1361.5 532.5L1365.5 534.5L1372.5 534.5L1379.5 534.5L1386.5 534.5L1393.5 534.5L1400.5 534.5L1404.5 539.5L1408.5 534.5L1411.5 531.5L1415.5 534.5L1423.5 535.5L1431.5 535.5L1439.5 535.5L1447.5 534.5L1455.5 534.5L1460.5 538.5L1463.5 535.5L1466.5 532.5L1470.5 535.5L1475.5 534.5L1480.5 535.5L1490.5 535.5L1491.5 536.5L1498.5 536.5L1505.5 535.5L1513.5 535.5L1520.5 535.5L1527.5 537.5L1535.5 536.5L1542.5 536.5L1550.5 536.5L1557.5 536.5L1564.5 536.5L1572.5 537.5L1580.5 538.5L1588.5 537.5L1597.5 537.5L1606.5 535.5L1610.5 536.5L1613.5 538.5L1617.5 532.5L1621.5 533.5L1625.5 534.5L1628.5 533.5L1632.5 537.5L1638.5 530.5L1642.5 534.5L1646.5 534.5L1650.5 535.5L1654.5 531.5L1658.5 530.5L1662.5 534.5L1666.5 529.5L1670.5 532.5L1674.5 531.5L1678.5 527.5L1682.5 533.5L1689.5 527.5L1694.5 531.5L1699.5 531.5L1703.5 536.5L1707.5 530.5L1710.5 528.5L1713.5 535.5L1717.5 527.5L1722.5 533.5L1728.5 528.5L1732.5 534.5L1736.5 531.5L1739.5 530.5L1743.5 537.5L1748.5 532.5L1751.5 533.5L1754.5 537.5L1760.5 538.5L1767.5 545.5L1772.5 552.5L1776.5 552.5L1779.5 561.5L1787.5 566.5L1793.5 579.5L1801.5 580.5L1805.5 583.5L1809.5 581.5L1814.5 584.5L1822.5 590.5L1826.5 589.5L1835.5 589.5L1838.5 590.5L1845.5 591.5L1852.5 590.5L1860.5 590.5L1864.5 591.5L1872.5 591.5L1880.5 591.5" stroke="#3399ff" stroke-width="1" fill="none" clip-path="url(#cT)"/>
<path d="M54.5 796.5L60.5 796.5L69.5 795.5L78.5 796.5L87.5 795.5L96.5 796.5L105.5 795.5L114.5 795.5L123.5 795.5L132.5 795.5L141.5 794.5L150.5 795.5L159.5 795.5L168.5 795.5L177.5 795.5L186.5 795.5L195.5 795.5L205.5 795.5L214.5 794.5L223.5 795.5L232.5 796.5L241.5 795.5L250.5 794.5L259.5 794.5L268.5 795.5L277.5 794.5L286.5 796.5L295.5 795.5L304.5 796.5L313.5 795.5L322.5 795.5L331.5 795.5L340.5 795.5L350.5 795.5L359.5 795.5L368.5 794.5L377.5 795.5L386.5 794.5L395.5 795.5L404.5 796.5L413.5 795.5L422.5 795.5L431.5 796.5L440.5 796.5L450.5 795.5L459.5 795.5L468.5 795.5L477.5 796.5L486.5 796.5L495.5 795.5L504.5 796.5L513.5 795.5L522.5 795.5L531.5 795.5L540.5 794.5L550.5 794.5L559.5 796.5L568.5 796.5L577.5 795.5L586.5 794.5L595.5 795.5L604.5 795.5L613.5 796.5L622.5 794.5L631.5 796.5L640.5 794.5L650.5 795.5L664.5 795.5L670.5 797.5L679.5 797.5L688.5 797.5L698.5 798.5L707.5 797.5L716.5 797.5L726.5 798.5L735.5 797.5L745.5 798.5L760.5 798.5L770.5 800.5L785.5 802.5L795.5 802.5L805.5 805.5L812.5 807.5L820.5 811.5L826.5 812.5L832.5 817.5L840.5 821.5L850.5 823.5L865.5 822.5L880.5 826.5L890.5 829.5L900.5 833.5L915.5 837.5L925.5 838.5L937.5 839.5L950.5 839.5L962.5 841.5L975.5 843.5L985.5 844.5L995.5 843.5L1005.5 841.5L1017.5 841.5L1030.5 839.5L1045.5 836.5L1057.5 836.5L1070.5 835.5L1085.5 833.5L1097.5 835.5L1103.5 832.5L1110.5 835.5L1120.5 834.5L1130.5 834.5L1142.5 834.5L1155.5 834.5L1162.5 832.5L1170.5 826.5L1180.5 824.5L1195.5 826.5L1205.5 827.5L1215.5 826.5L1228.5 823.5L1240.5 824.5L1250.5 822.5L1260.5 821.5L1270.5 821.5L1280.5 822.5L1285.5 818.5L1296.5 819.5L1306.5 812.5L1310.5 813.5L1315.5 811.5L1331.5 811.5L1340.5 806.5L1345.5 805.5L1350.5 806.5L1358.5 804.5L1363.5 802.5L1368.5 802.5L1373.5 796.5L1378.5 795.5L1387.5 794.5L1396.5 795.5L1405.5 796.5L1411.5 795.5L1415.5 792.5L1422.5 793.5L1427.5 792.5L1435.5 792.5L1445.5 792.5L1457.5 793.5L1465.5 790.5L1472.5 787.5L1476.5 789.5L1480.5 785.5L1490.5 782.5L1500.5 780.5L1508.5 781.5L1520.5 778.5L1535.5 776.5L1550.5 775.5L1555.5 776.5L1563.5 773.5L1573.5 771.5L1582.5 770.5L1591.5 771.5L1595.5 775.5L1598.5 783.5L1602.5 789.5L1607.5 793.5L1615.5 794.5L1623.5 795.5L1627.5 800.5L1632.5 807.5L1647.5 807.5L1653.5 811.5L1659.5 816.5L1663.5 816.5L1670.5 821.5L1675.5 821.5L1678.5 823.5L1685.5 822.5L1689.5 824.5L1693.5 822.5L1698.5 824.5L1703.5 830.5L1713.5 832.5L1719.5 836.5L1724.5 837.5L1730.5 842.5L1745.5 842.5L1750.5 841.5L1757.5 838.5L1763.5 837.5L1771.5 831.5L1775.5 829.5L1781.5 819.5L1787.5 812.5L1793.5 804.5L1798.5 802.5L1804.5 799.5L1815.5 798.5L1824.5 798.5L1833.5 797.5L1842.5 797.5L1852.5 797.5L1861.5 798.5L1870.5 799.5L1880.5 798.5" stroke="#ff66dd" stroke-width="1" fill="none" clip-path="url(#cC)"/>
<path d="M54.5 796.5L60.5 796.5L69.5 795.5L78.5 796.5L87.5 795.5L96.5 796.5L105.5 795.5L114.5 795.5L123.5 795.5L132.5 795.5L141.5 794.5L150.5 795.5L159.5 795.5L168.5 795.5L177.5 795.5L186.5 795.5L195.5 795.5L205.5 795.5L214.5 794.5L223.5 795.5L232.5 796.5L241.5 795.5L250.5 794.5L259.5 794.5L268.5 795.5L277.5 794.5L286.5 796.5L295.5 795.5L304.5 796.5L313.5 795.5L322.5 795.5L331.5 795.5L340.5 795.5L350.5 795.5L359.5 795.5L368.5 794.5L377.5 795.5L386.5 794.5L395.5 795.5L404.5 796.5L413.5 795.5L422.5 795.5L431.5 796.5L440.5 796.5L450.5 795.5L459.5 795.5L468.5 795.5L477.5 796.5L486.5 796.5L495.5 795.5L504.5 796.5L513.5 795.5L522.5 795.5L531.5 795.5L540.5 794.5L550.5 794.5L559.5 796.5L568.5 796.5L577.5 795.5L586.5 794.5L595.5 795.5L604.5 795.5L613.5 796.5L622.5 794.5L631.5 796.5L640.5 794.5L650.5 795.5L664.5 795.5L670.5 797.5L679.5 797.5L688.5 797.5L698.5 798.5L707.5 797.5L716.5 797.5L726.5 798.5L735.5 797.5L745.5 798.5L760.5 798.5L770.5 800.5L785.5 802.5L795.5 802.5L805.5 805.5L812.5 807.5L820.5 811.5L826.5 812.5L832.5 817.5L840.5 821.5L850.5 823.5L865.5 822.5L880.5 826.5L890.5 829.5L900.5 833.5L915.5 837.5L925.5 838.5L937.5 839.5L950.5 839.5L962.5 841.5L975.5 843.5L985.5 844.5L995.5 843.5L1005.5 841.5L1017.5 841.5L1030.5 839.5L1045.5 836.5L1057.5 836.5L1070.5 835.5L1085.5 833.5L1097.5 835.5L1103.5 832.5L1110.5 835.5L1120.5 834.5L1130.5 834.5L1142.5 834.5L1155.5 834.5L1162.5 832.5L1170.5 826.5L1180.5 824.5L1195.5 826.5L1205.5 827.5L1215.5 826.5L1228.5 823.5L1240.5 824.5L1250.5 822.5L1260.5 821.5L1270.5 821.5L1280.5 822.5L1285.5 818.5L1296.5 819.5L1306.5 812.5L1310.5 813.5L1315.5 811.5L1331.5 811.5L1340.5 806.5L1345.5 805.5L1350.5 806.5L1358.5 804.5L1363.5 802.5L1368.5 802.5L1373.5 796.5L1378.5 795.5L1387.5 794.5L1396.5 795.5L1405.5 796.5L1411.5 795.5L1415.5 792.5L1422.5 793.5L1427.5 792.5L1435.5 792.5L1445.5 792.5L1457.5 793.5L1465.5 790.5L1472.5 787.5L1476.5 789.5L1480.5 785.5L1490.5 782.5L1500.5 780.5L1508.5 781.5L1520.5 778.5L1535.5 776.5L1550.5 775.5L1555.5 776.5L1563.5 773.5L1573.5 771.5L1582.5 770.5L1591.5 771.5L1595.5 775.5L1598.5 783.5L1602.5 789.5L1607.5 793.5L1615.5 794.5L1623.5 795.5L1627.5 800.5L1632.5 807.5L1647.5 807.5L1653.5 811.5L1659.5 816.5L1663.5 816.5L1670.5 821.5L1675.5 821.5L1678.5 823.5L1685.5 822.5L1689.5 824.5L1693.5 822.5L1698.5 824.5L1703.5 830.5L1713.5 832.5L1719.5 836.5L1724.5 837.5L1730.5 842.5L1745.5 842.5L1750.5 841.5L1757.5 838.5L1763.5 837.5L1771.5 831.5L1775.5 829.5L1781.5 819.5L1787.5 812.5L1793.5 804.5L1798.5 802.5L1804.5 799.5L1815.5 798.5L1824.5 798.5L1833.5 797.5L1842.5 797.5L1852.5 797.5L1861.5 798.5L1870.5 799.5L1880.5 798.5" stroke="#ff66dd" stroke-width="1" fill="none" clip-path="url(#cL)"/>
<path d="M54.5 797.5L63.5 797.5L72.5 797.5L81.5 797.5L91.5 796.5L100.5 797.5L109.5 796.5L118.5 797.5L128.5 797.5L137.5 797.5L146.5 796.5L155.5 797.5L165.5 797.5L174.5 796.5L183.5 797.5L192.5 797.5L202.5 798.5L211.5 796.5L220.5 797.5L229.5 797.5L239.5 797.5L248.5 797.5L257.5 796.5L266.5 797.5L276.5 797.5L285.5 798.5L294.5 798.5L303.5 798.5L313.5 798.5L322.5 797.5L331.5 798.5L340.5 798.5L350.5 798.5L359.5 797.5L368.5 798.5L378.5 798.5L387.5 798.5L396.5 798.5L406.5 797.5L415.5 799.5L425.5 797.5L434.5 799.5L443.5 799.5L453.5 798.5L462.5 799.5L471.5 799.5L481.5 799.5L490.5 799.5L500.5 799.5L509.5 800.5L518.5 799.5L528.5 800.5L537.5 799.5L546.5 800.5L556.5 799.5L565.5 798.5L575.5 799.5L584.5 799.5L593.5 800.5L603.5 799.5L612.5 799.5L621.5 800.5L631.5 800.5L640.5 801.5L650.5 800.5L664.5 800.5L669.5 798.5L678.5 797.5L688.5 798.5L697.5 799.5L707.5 798.5L716.5 798.5L726.5 797.5L735.5 797.5L745.5 797.5L760.5 797.5L768.5 795.5L780.5 794.5L795.5 793.5L805.5 790.5L812.5 787.5L817.5 787.5L826.5 783.5L833.5 778.5L840.5 775.5L850.5 773.5L865.5 773.5L880.5 770.5L890.5 767.5L900.5 765.5L915.5 761.5L925.5 760.5L935.5 761.5L945.5 760.5L950.5 759.5L962.5 759.5L975.5 757.5L985.5 756.5L995.5 757.5L1010.5 759.5L1020.5 759.5L1030.5 761.5L1045.5 763.5L1057.5 763.5L1070.5 765.5L1080.5 764.5L1090.5 765.5L1100.5 766.5L1116.5 765.5L1127.5 765.5L1138.5 765.5L1149.5 766.5L1160.5 766.5L1164.5 768.5L1168.5 771.5L1180.5 774.5L1190.5 773.5L1200.5 772.5L1215.5 772.5L1228.5 775.5L1235.5 774.5L1250.5 775.5L1260.5 776.5L1270.5 775.5L1280.5 776.5L1287.5 779.5L1296.5 778.5L1305.5 783.5L1317.5 784.5L1330.5 784.5L1340.5 788.5L1355.5 789.5L1367.5 791.5L1373.5 795.5L1380.5 796.5L1390.5 796.5L1400.5 795.5L1410.5 796.5L1415.5 797.5L1425.5 798.5L1435.5 798.5L1446.5 798.5L1457.5 798.5L1462.5 799.5L1475.5 801.5L1480.5 803.5L1490.5 805.5L1500.5 805.5L1510.5 805.5L1520.5 806.5L1530.5 808.5L1540.5 809.5L1550.5 809.5L1560.5 809.5L1570.5 811.5L1581.5 811.5L1592.5 811.5L1596.5 809.5L1599.5 804.5L1605.5 798.5L1610.5 798.5L1615.5 796.5L1623.5 796.5L1627.5 792.5L1631.5 788.5L1645.5 788.5L1654.5 785.5L1656.5 781.5L1665.5 779.5L1671.5 776.5L1674.5 777.5L1677.5 775.5L1686.5 775.5L1695.5 775.5L1700.5 772.5L1705.5 768.5L1713.5 767.5L1718.5 763.5L1724.5 762.5L1728.5 758.5L1736.5 758.5L1740.5 756.5L1748.5 758.5L1754.5 760.5L1762.5 761.5L1768.5 765.5L1775.5 768.5L1781.5 776.5L1787.5 783.5L1793.5 790.5L1798.5 792.5L1803.5 794.5L1811.5 795.5L1816.5 797.5L1825.5 798.5L1834.5 798.5L1843.5 797.5L1852.5 799.5L1861.5 799.5L1870.5 798.5L1880.5 798.5" stroke="#ff0000" stroke-width="1" fill="none" clip-path="url(#cC)"/>
<path d="M54.5 797.5L63.5 797.5L72.5 797.5L81.5 797.5L91.5 796.5L100.5 797.5L109.5 796.5L118.5 797.5L128.5 797.5L137.5 797.5L146.5 796.5L155.5 797.5L165.5 797.5L174.5 796.5L183.5 797.5L192.5 797.5L202.5 798.5L211.5 796.5L220.5 797.5L229.5 797.5L239.5 797.5L248.5 797.5L257.5 796.5L266.5 797.5L276.5 797.5L285.5 798.5L294.5 798.5L303.5 798.5L313.5 798.5L322.5 797.5L331.5 798.5L340.5 798.5L350.5 798.5L359.5 797.5L368.5 798.5L378.5 798.5L387.5 798.5L396.5 798.5L406.5 797.5L415.5 799.5L425.5 797.5L434.5 799.5L443.5 799.5L453.5 798.5L462.5 799.5L471.5 799.5L481.5 799.5L490.5 799.5L500.5 799.5L509.5 800.5L518.5 799.5L528.5 800.5L537.5 799.5L546.5 800.5L556.5 799.5L565.5 798.5L575.5 799.5L584.5 799.5L593.5 800.5L603.5 799.5L612.5 799.5L621.5 800.5L631.5 800.5L640.5 801.5L650.5 800.5L664.5 800.5L669.5 798.5L678.5 797.5L688.5 798.5L697.5 799.5L707.5 798.5L716.5 798.5L726.5 797.5L735.5 797.5L745.5 797.5L760.5 797.5L768.5 795.5L780.5 794.5L795.5 793.5L805.5 790.5L812.5 787.5L817.5 787.5L826.5 783.5L833.5 778.5L840.5 775.5L850.5 773.5L865.5 773.5L880.5 770.5L890.5 767.5L900.5 765.5L915.5 761.5L925.5 760.5L935.5 761.5L945.5 760.5L950.5 759.5L962.5 759.5L975.5 757.5L985.5 756.5L995.5 757.5L1010.5 759.5L1020.5 759.5L1030.5 761.5L1045.5 763.5L1057.5 763.5L1070.5 765.5L1080.5 764.5L1090.5 765.5L1100.5 766.5L1116.5 765.5L1127.5 765.5L1138.5 765.5L1149.5 766.5L1160.5 766.5L1164.5 768.5L1168.5 771.5L1180.5 774.5L1190.5 773.5L1200.5 772.5L1215.5 772.5L1228.5 775.5L1235.5 774.5L1250.5 775.5L1260.5 776.5L1270.5 775.5L1280.5 776.5L1287.5 779.5L1296.5 778.5L1305.5 783.5L1317.5 784.5L1330.5 784.5L1340.5 788.5L1355.5 789.5L1367.5 791.5L1373.5 795.5L1380.5 796.5L1390.5 796.5L1400.5 795.5L1410.5 796.5L1415.5 797.5L1425.5 798.5L1435.5 798.5L1446.5 798.5L1457.5 798.5L1462.5 799.5L1475.5 801.5L1480.5 803.5L1490.5 805.5L1500.5 805.5L1510.5 805.5L1520.5 806.5L1530.5 808.5L1540.5 809.5L1550.5 809.5L1560.5 809.5L1570.5 811.5L1581.5 811.5L1592.5 811.5L1596.5 809.5L1599.5 804.5L1605.5 798.5L1610.5 798.5L1615.5 796.5L1623.5 796.5L1627.5 792.5L1631.5 788.5L1645.5 788.5L1654.5 785.5L1656.5 781.5L1665.5 779.5L1671.5 776.5L1674.5 777.5L1677.5 775.5L1686.5 775.5L1695.5 775.5L1700.5 772.5L1705.5 768.5L1713.5 767.5L1718.5 763.5L1724.5 762.5L1728.5 758.5L1736.5 758.5L1740.5 756.5L1748.5 758.5L1754.5 760.5L1762.5 761.5L1768.5 765.5L1775.5 768.5L1781.5 776.5L1787.5 783.5L1793.5 790.5L1798.5 792.5L1803.5 794.5L1811.5 795.5L1816.5 797.5L1825.5 798.5L1834.5 798.5L1843.5 797.5L1852.5 799.5L1861.5 799.5L1870.5 798.5L1880.5 798.5" stroke="#ff0000" stroke-width="1" fill="none" clip-path="url(#cL)"/>
<path d="M54.5 734.5L63.5 734.5L73.5 734.5L82.5 734.5L92.5 735.5L101.5 735.5L111.5 735.5L120.5 735.5L130.5 735.5L139.5 734.5L148.5 736.5L157.5 735.5L166.5 735.5L175.5 736.5L184.5 736.5L193.5 736.5L202.5 737.5L211.5 738.5L220.5 737.5L230.5 737.5L240.5 737.5L243.5 736.5L252.5 736.5L255.5 737.5L262.5 736.5L270.5 738.5L285.5 738.5L290.5 737.5L295.5 738.5L304.5 738.5L313.5 738.5L322.5 737.5L331.5 738.5L340.5 738.5L350.5 738.5L359.5 739.5L368.5 738.5L378.5 738.5L387.5 739.5L396.5 739.5L406.5 740.5L415.5 739.5L425.5 739.5L434.5 740.5L443.5 739.5L453.5 738.5L462.5 739.5L471.5 739.5L481.5 739.5L490.5 740.5L500.5 740.5L509.5 740.5L518.5 740.5L528.5 739.5L537.5 741.5L546.5 740.5L556.5 740.5L565.5 739.5L575.5 740.5L584.5 740.5L593.5 741.5L603.5 739.5L612.5 740.5L621.5 740.5L631.5 741.5L640.5 741.5L650.5 741.5L655.5 740.5L664.5 740.5L668.5 742.5L677.5 742.5L687.5 742.5L696.5 742.5L706.5 743.5L716.5 743.5L725.5 743.5L735.5 744.5L745.5 743.5L760.5 743.5L770.5 745.5L780.5 747.5L792.5 748.5L802.5 750.5L812.5 753.5L824.5 758.5L836.5 765.5L846.5 768.5L855.5 768.5L865.5 768.5L875.5 770.5L890.5 775.5L905.5 779.5L920.5 782.5L935.5 783.5L950.5 786.5L960.5 789.5L970.5 790.5L980.5 790.5L990.5 790.5L1000.5 790.5L1010.5 789.5L1020.5 790.5L1030.5 789.5L1039.5 789.5L1048.5 789.5L1058.5 789.5L1067.5 790.5L1076.5 789.5L1086.5 789.5L1095.5 789.5L1104.5 788.5L1114.5 788.5L1123.5 789.5L1132.5 789.5L1142.5 789.5L1151.5 789.5L1160.5 789.5L1170.5 789.5L1180.5 787.5L1195.5 789.5L1204.5 790.5L1213.5 788.5L1222.5 788.5L1231.5 788.5L1240.5 789.5L1250.5 788.5L1260.5 789.5L1270.5 787.5L1280.5 788.5L1290.5 787.5L1300.5 788.5L1307.5 786.5L1318.5 786.5L1330.5 786.5L1335.5 787.5L1347.5 786.5L1360.5 786.5L1365.5 785.5L1375.5 784.5L1385.5 784.5L1397.5 785.5L1410.5 785.5L1415.5 784.5L1425.5 785.5L1435.5 784.5L1445.5 784.5L1455.5 785.5L1470.5 784.5L1480.5 783.5L1490.5 784.5L1500.5 782.5L1510.5 783.5L1520.5 783.5L1530.5 782.5L1540.5 783.5L1550.5 782.5L1559.5 782.5L1568.5 782.5L1577.5 782.5L1586.5 782.5L1589.5 781.5L1603.5 782.5L1617.5 785.5L1625.5 784.5L1638.5 785.5L1643.5 784.5L1652.5 784.5L1661.5 786.5L1670.5 787.5L1676.5 786.5L1688.5 787.5L1695.5 786.5L1707.5 787.5L1719.5 788.5L1730.5 788.5L1739.5 786.5L1748.5 784.5L1757.5 780.5L1765.5 777.5L1771.5 771.5L1778.5 765.5L1783.5 759.5L1787.5 756.5L1793.5 748.5L1798.5 747.5L1804.5 744.5L1815.5 743.5L1825.5 743.5L1834.5 744.5L1843.5 742.5L1852.5 743.5L1861.5 743.5L1870.5 743.5L1880.5 743.5" stroke="#33ffff" stroke-width="1" fill="none" clip-path="url(#cC)"/>
<path d="M54.5 734.5L63.5 734.5L73.5 734.5L82.5 734.5L92.5 735.5L101.5 735.5L111.5 735.5L120.5 735.5L130.5 735.5L139.5 734.5L148.5 736.5L157.5 735.5L166.5 735.5L175.5 736.5L184.5 736.5L193.5 736.5L202.5 737.5L211.5 738.5L220.5 737.5L230.5 737.5L240.5 737.5L243.5 736.5L252.5 736.5L255.5 737.5L262.5 736.5L270.5 738.5L285.5 738.5L290.5 737.5L295.5 738.5L304.5 738.5L313.5 738.5L322.5 737.5L331.5 738.5L340.5 738.5L350.5 738.5L359.5 739.5L368.5 738.5L378.5 738.5L387.5 739.5L396.5 739.5L406.5 740.5L415.5 739.5L425.5 739.5L434.5 740.5L443.5 739.5L453.5 738.5L462.5 739.5L471.5 739.5L481.5 739.5L490.5 740.5L500.5 740.5L509.5 740.5L518.5 740.5L528.5 739.5L537.5 741.5L546.5 740.5L556.5 740.5L565.5 739.5L575.5 740.5L584.5 740.5L593.5 741.5L603.5 739.5L612.5 740.5L621.5 740.5L631.5 741.5L640.5 741.5L650.5 741.5L655.5 740.5L664.5 740.5L668.5 742.5L677.5 742.5L687.5 742.5L696.5 742.5L706.5 743.5L716.5 743.5L725.5 743.5L735.5 744.5L745.5 743.5L760.5 743.5L770.5 745.5L780.5 747.5L792.5 748.5L802.5 750.5L812.5 753.5L824.5 758.5L836.5 765.5L846.5 768.5L855.5 768.5L865.5 768.5L875.5 770.5L890.5 775.5L905.5 779.5L920.5 782.5L935.5 783.5L950.5 786.5L960.5 789.5L970.5 790.5L980.5 790.5L990.5 790.5L1000.5 790.5L1010.5 789.5L1020.5 790.5L1030.5 789.5L1039.5 789.5L1048.5 789.5L1058.5 789.5L1067.5 790.5L1076.5 789.5L1086.5 789.5L1095.5 789.5L1104.5 788.5L1114.5 788.5L1123.5 789.5L1132.5 789.5L1142.5 789.5L1151.5 789.5L1160.5 789.5L1170.5 789.5L1180.5 787.5L1195.5 789.5L1204.5 790.5L1213.5 788.5L1222.5 788.5L1231.5 788.5L1240.5 789.5L1250.5 788.5L1260.5 789.5L1270.5 787.5L1280.5 788.5L1290.5 787.5L1300.5 788.5L1307.5 786.5L1318.5 786.5L1330.5 786.5L1335.5 787.5L1347.5 786.5L1360.5 786.5L1365.5 785.5L1375.5 784.5L1385.5 784.5L1397.5 785.5L1410.5 785.5L1415.5 784.5L1425.5 785.5L1435.5 784.5L1445.5 784.5L1455.5 785.5L1470.5 784.5L1480.5 783.5L1490.5 784.5L1500.5 782.5L1510.5 783.5L1520.5 783.5L1530.5 782.5L1540.5 783.5L1550.5 782.5L1559.5 782.5L1568.5 782.5L1577.5 782.5L1586.5 782.5L1589.5 781.5L1603.5 782.5L1617.5 785.5L1625.5 784.5L1638.5 785.5L1643.5 784.5L1652.5 784.5L1661.5 786.5L1670.5 787.5L1676.5 786.5L1688.5 787.5L1695.5 786.5L1707.5 787.5L1719.5 788.5L1730.5 788.5L1739.5 786.5L1748.5 784.5L1757.5 780.5L1765.5 777.5L1771.5 771.5L1778.5 765.5L1783.5 759.5L1787.5 756.5L1793.5 748.5L1798.5 747.5L1804.5 744.5L1815.5 743.5L1825.5 743.5L1834.5 744.5L1843.5 742.5L1852.5 743.5L1861.5 743.5L1870.5 743.5L1880.5 743.5" stroke="#33ffff" stroke-width="1" fill="none" clip-path="url(#cL)" opacity="0.5"/>
<path d="M54.5 734.5L63.5 734.5L73.5 736.5L82.5 735.5L92.5 734.5L101.5 735.5L111.5 736.5L120.5 736.5L130.5 736.5L140.5 737.5L150.5 736.5L160.5 738.5L170.5 739.5L180.5 738.5L190.5 739.5L200.5 740.5L210.5 740.5L220.5 739.5L230.5 739.5L240.5 739.5L250.5 739.5L260.5 740.5L270.5 740.5L280.5 740.5L290.5 740.5L300.5 740.5L310.5 741.5L320.5 741.5L330.5 741.5L340.5 741.5L350.5 741.5L359.5 740.5L368.5 740.5L378.5 741.5L387.5 742.5L396.5 741.5L406.5 741.5L415.5 742.5L425.5 743.5L434.5 741.5L443.5 742.5L453.5 742.5L462.5 742.5L471.5 743.5L481.5 743.5L490.5 743.5L500.5 743.5L509.5 743.5L518.5 743.5L528.5 743.5L537.5 743.5L546.5 743.5L556.5 744.5L565.5 745.5L575.5 744.5L584.5 744.5L593.5 744.5L603.5 744.5L612.5 745.5L621.5 745.5L631.5 745.5L640.5 744.5L650.5 745.5L664.5 745.5L670.5 743.5L679.5 743.5L688.5 743.5L698.5 743.5L707.5 743.5L716.5 743.5L726.5 743.5L735.5 742.5L745.5 743.5L760.5 741.5L770.5 739.5L780.5 739.5L791.5 738.5L802.5 736.5L812.5 733.5L824.5 727.5L836.5 720.5L850.5 718.5L863.5 718.5L880.5 714.5L897.5 708.5L906.5 706.5L915.5 704.5L930.5 702.5L940.5 700.5L950.5 699.5L960.5 696.5L970.5 695.5L980.5 694.5L990.5 694.5L1000.5 695.5L1009.5 695.5L1018.5 695.5L1027.5 695.5L1037.5 695.5L1046.5 695.5L1055.5 696.5L1064.5 695.5L1074.5 695.5L1083.5 696.5L1092.5 694.5L1101.5 695.5L1111.5 695.5L1120.5 695.5L1129.5 694.5L1138.5 695.5L1148.5 695.5L1157.5 695.5L1166.5 694.5L1175.5 695.5L1185.5 695.5L1194.5 695.5L1203.5 695.5L1212.5 695.5L1222.5 696.5L1231.5 695.5L1240.5 696.5L1250.5 696.5L1260.5 696.5L1270.5 695.5L1280.5 696.5L1290.5 695.5L1300.5 696.5L1310.5 695.5L1320.5 696.5L1330.5 697.5L1340.5 697.5L1350.5 697.5L1360.5 698.5L1370.5 699.5L1380.5 699.5L1390.5 698.5L1400.5 699.5L1410.5 699.5L1420.5 699.5L1430.5 699.5L1440.5 699.5L1450.5 698.5L1460.5 699.5L1470.5 699.5L1480.5 700.5L1490.5 700.5L1500.5 700.5L1510.5 700.5L1520.5 699.5L1530.5 699.5L1540.5 700.5L1550.5 700.5L1560.5 700.5L1570.5 700.5L1580.5 699.5L1590.5 699.5L1600.5 700.5L1610.5 699.5L1620.5 699.5L1630.5 698.5L1640.5 698.5L1650.5 698.5L1659.5 697.5L1668.5 697.5L1677.5 697.5L1687.5 696.5L1695.5 698.5L1707.5 696.5L1719.5 696.5L1735.5 697.5L1748.5 700.5L1757.5 703.5L1763.5 706.5L1771.5 713.5L1776.5 717.5L1782.5 725.5L1787.5 729.5L1793.5 737.5L1798.5 738.5L1804.5 741.5L1815.5 742.5L1825.5 743.5L1840.5 743.5L1850.5 743.5L1860.5 743.5L1870.5 742.5L1880.5 742.5" stroke="#3399ff" stroke-width="1" fill="none" clip-path="url(#cC)"/>
<path d="M54.5 734.5L63.5 734.5L73.5 736.5L82.5 735.5L92.5 734.5L101.5 735.5L111.5 736.5L120.5 736.5L130.5 736.5L140.5 737.5L150.5 736.5L160.5 738.5L170.5 739.5L180.5 738.5L190.5 739.5L200.5 740.5L210.5 740.5L220.5 739.5L230.5 739.5L240.5 739.5L250.5 739.5L260.5 740.5L270.5 740.5L280.5 740.5L290.5 740.5L300.5 740.5L310.5 741.5L320.5 741.5L330.5 741.5L340.5 741.5L350.5 741.5L359.5 740.5L368.5 740.5L378.5 741.5L387.5 742.5L396.5 741.5L406.5 741.5L415.5 742.5L425.5 743.5L434.5 741.5L443.5 742.5L453.5 742.5L462.5 742.5L471.5 743.5L481.5 743.5L490.5 743.5L500.5 743.5L509.5 743.5L518.5 743.5L528.5 743.5L537.5 743.5L546.5 743.5L556.5 744.5L565.5 745.5L575.5 744.5L584.5 744.5L593.5 744.5L603.5 744.5L612.5 745.5L621.5 745.5L631.5 745.5L640.5 744.5L650.5 745.5L664.5 745.5L670.5 743.5L679.5 743.5L688.5 743.5L698.5 743.5L707.5 743.5L716.5 743.5L726.5 743.5L735.5 742.5L745.5 743.5L760.5 741.5L770.5 739.5L780.5 739.5L791.5 738.5L802.5 736.5L812.5 733.5L824.5 727.5L836.5 720.5L850.5 718.5L863.5 718.5L880.5 714.5L897.5 708.5L906.5 706.5L915.5 704.5L930.5 702.5L940.5 700.5L950.5 699.5L960.5 696.5L970.5 695.5L980.5 694.5L990.5 694.5L1000.5 695.5L1009.5 695.5L1018.5 695.5L1027.5 695.5L1037.5 695.5L1046.5 695.5L1055.5 696.5L1064.5 695.5L1074.5 695.5L1083.5 696.5L1092.5 694.5L1101.5 695.5L1111.5 695.5L1120.5 695.5L1129.5 694.5L1138.5 695.5L1148.5 695.5L1157.5 695.5L1166.5 694.5L1175.5 695.5L1185.5 695.5L1194.5 695.5L1203.5 695.5L1212.5 695.5L1222.5 696.5L1231.5 695.5L1240.5 696.5L1250.5 696.5L1260.5 696.5L1270.5 695.5L1280.5 696.5L1290.5 695.5L1300.5 696.5L1310.5 695.5L1320.5 696.5L1330.5 697.5L1340.5 697.5L1350.5 697.5L1360.5 698.5L1370.5 699.5L1380.5 699.5L1390.5 698.5L1400.5 699.5L1410.5 699.5L1420.5 699.5L1430.5 699.5L1440.5 699.5L1450.5 698.5L1460.5 699.5L1470.5 699.5L1480.5 700.5L1490.5 700.5L1500.5 700.5L1510.5 700.5L1520.5 699.5L1530.5 699.5L1540.5 700.5L1550.5 700.5L1560.5 700.5L1570.5 700.5L1580.5 699.5L1590.5 699.5L1600.5 700.5L1610.5 699.5L1620.5 699.5L1630.5 698.5L1640.5 698.5L1650.5 698.5L1659.5 697.5L1668.5 697.5L1677.5 697.5L1687.5 696.5L1695.5 698.5L1707.5 696.5L1719.5 696.5L1735.5 697.5L1748.5 700.5L1757.5 703.5L1763.5 706.5L1771.5 713.5L1776.5 717.5L1782.5 725.5L1787.5 729.5L1793.5 737.5L1798.5 738.5L1804.5 741.5L1815.5 742.5L1825.5 743.5L1840.5 743.5L1850.5 743.5L1860.5 743.5L1870.5 742.5L1880.5 742.5" stroke="#3399ff" stroke-width="1" fill="none" clip-path="url(#cL)" opacity="0.5"/>
<rect x="1116" y="483" width="1" height="14" fill="#ffff00"/>
<rect x="1116" y="500" width="1" height="14" fill="#ffff00"/>
<rect x="1116" y="517" width="1" height="333" fill="#ffff00"/>
<path d="M1110 528h13v1h1v1h-1v1h-13v-1h-1v-1h1z" fill="#ffff00"/>
<path d="M1110 550h13v1h1v1h-1v1h-13v-1h-1v-1h1z" fill="#ffff00"/>
<path d="M1110 640h13v1h1v1h-1v1h-13v-1h-1v-1h1z" fill="#ffff00"/>
<path d="M1110 672h13v1h1v1h-1v1h-13v-1h-1v-1h1z" fill="#ffff00"/>
<path d="M1110 694h13v1h1v1h-1v1h-13v-1h-1v-1h1z" fill="#ffff00"/>
<path d="M1110 764h13v1h1v1h-1v1h-13v-1h-1v-1h1z" fill="#ffff00"/>
<path d="M1110 789h13v1h1v1h-1v1h-13v-1h-1v-1h1z" fill="#ffff00"/>
<path d="M1110 834h13v1h1v1h-1v1h-13v-1h-1v-1h1z" fill="#ffff00"/>
<text x="966.5" y="494" text-anchor="middle" fill="#fff">No Lap</text>
<rect x="20" y="852" width="30" height="13" fill="#000"/>
<text x="22" y="863" fill="#fff" textLength="26" lengthAdjust="spacingAndGlyphs">metre</text>
<text x="64" y="528" fill="#ff66dd" textLength="75.2" lengthAdjust="spacingAndGlyphs">Tire Load FL [N]</text>
<text x="190.3" y="528" text-anchor="end" fill="#ff66dd">1092</text>
<text x="64" y="541" fill="#ff0000" textLength="77.1" lengthAdjust="spacingAndGlyphs">Tire Load FR [N]</text>
<text x="190.3" y="541" text-anchor="end" fill="#ff0000">7058</text>
<text x="64" y="554" fill="#33ffff" textLength="75.4" lengthAdjust="spacingAndGlyphs">Tire Load RL [N]</text>
<text x="190.3" y="554" text-anchor="end" fill="#33ffff">2621</text>
<text x="64" y="567" fill="#3399ff" textLength="77.3" lengthAdjust="spacingAndGlyphs">Tire Load RR [N]</text>
<text x="190.3" y="567" text-anchor="end" fill="#3399ff">8130</text>
<text x="64" y="696" fill="#ff66dd" textLength="65.8" lengthAdjust="spacingAndGlyphs">Camber FL [°]</text>
<text x="191.4" y="696" text-anchor="end" fill="#ff66dd">-4.61</text>
<text x="64" y="709" fill="#ff0000" textLength="67.7" lengthAdjust="spacingAndGlyphs">Camber FR [°]</text>
<text x="191.4" y="709" text-anchor="end" fill="#ff0000">-3.00</text>
<text x="64" y="722" fill="#33ffff" textLength="66" lengthAdjust="spacingAndGlyphs">Camber RL [°]</text>
<text x="191.4" y="722" text-anchor="end" fill="#33ffff">-3.57</text>
<text x="64" y="735" fill="#3399ff" textLength="68.1" lengthAdjust="spacingAndGlyphs">Camber RR [°]</text>
<text x="191.4" y="735" text-anchor="end" fill="#3399ff">-1.36</text>
</g></svg></body></html>
